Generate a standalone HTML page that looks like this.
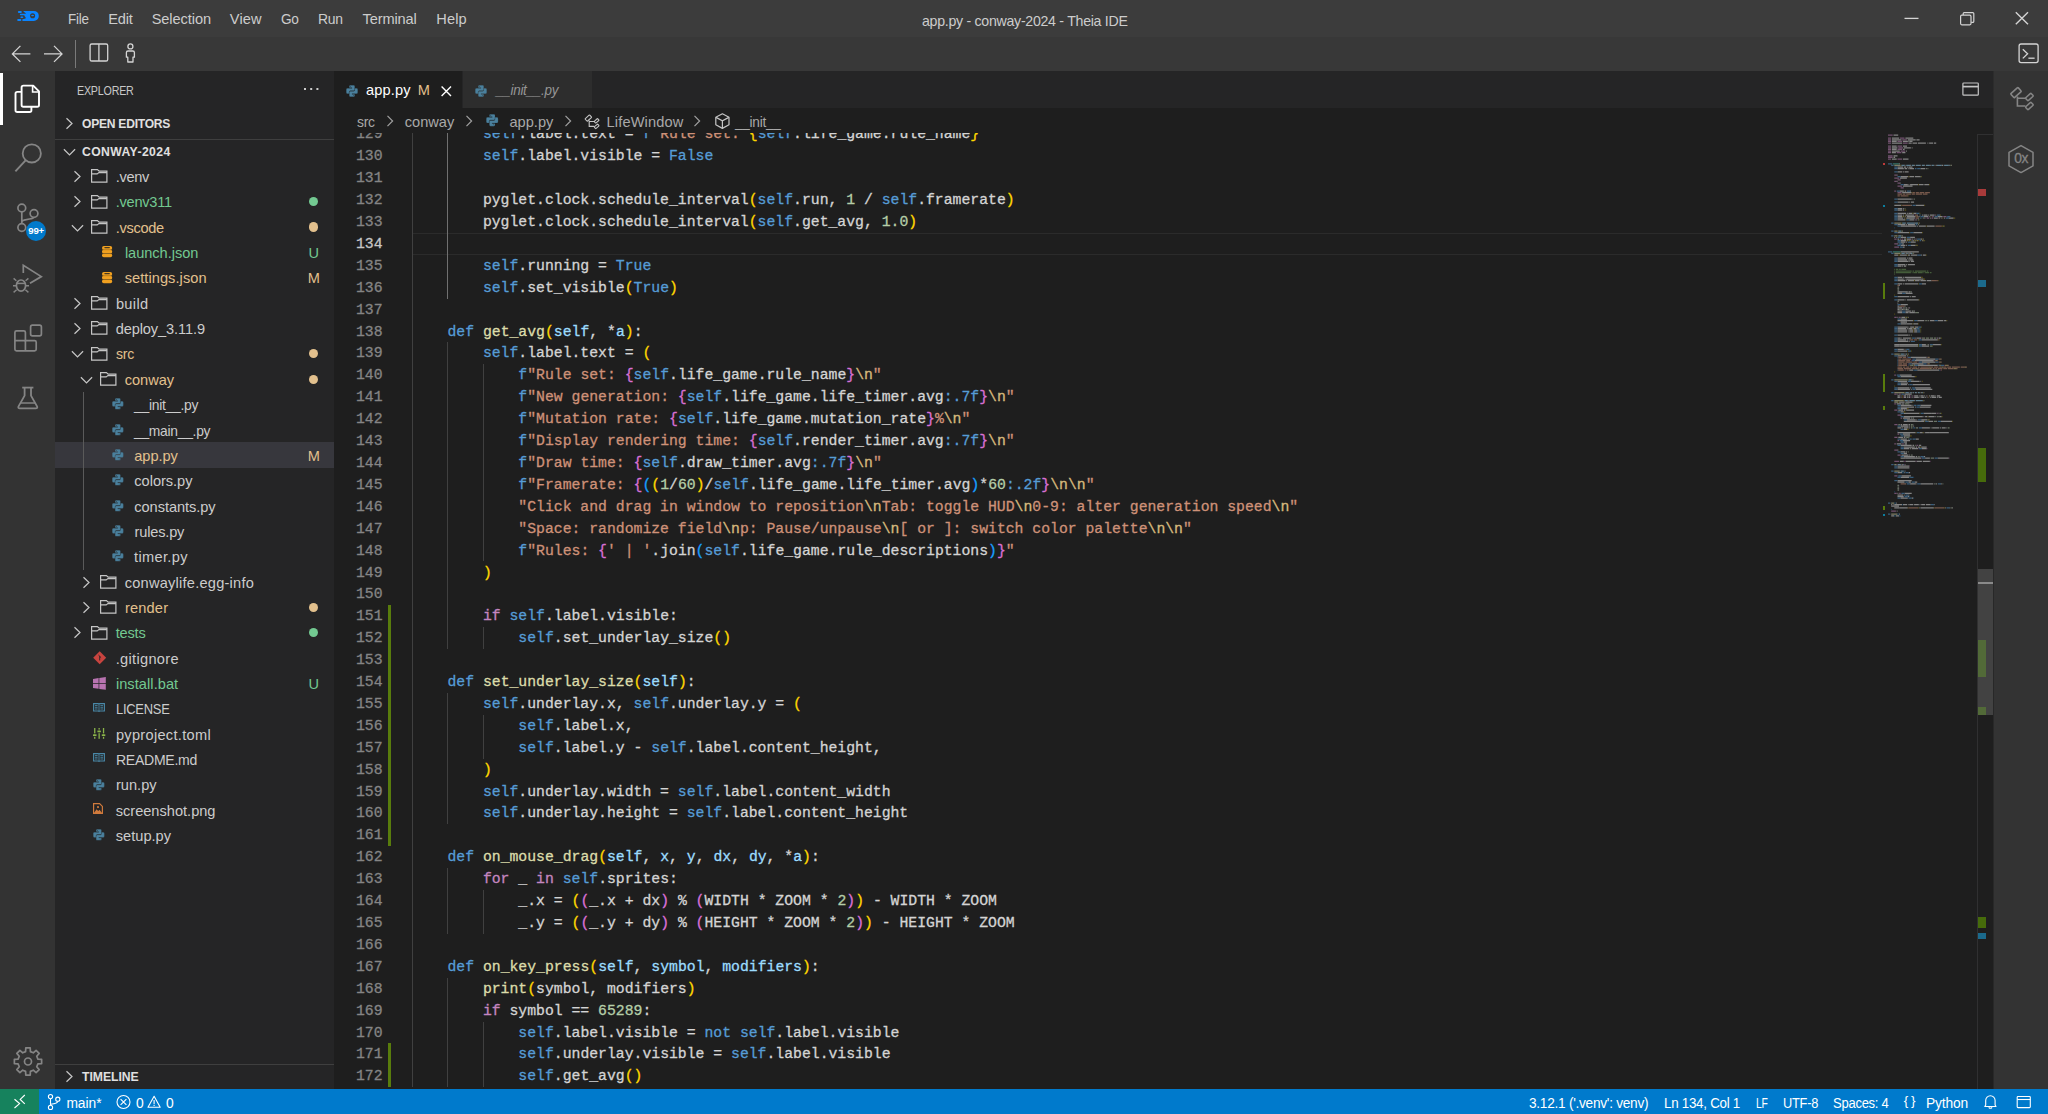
<!DOCTYPE html><html><head><meta charset="utf-8"><title>app.py - conway-2024 - Theia IDE</title><style>*{box-sizing:border-box;margin:0;padding:0}
html,body{width:2048px;height:1114px;overflow:hidden;background:#1e1e1e}
body{font-family:"Liberation Sans",sans-serif;font-size:14px;color:#ccc;position:relative}
i{font-style:normal}
svg{position:absolute;overflow:visible}
div,span{position:absolute}
.t{white-space:pre;color:#ccc;transform-origin:0 0}
.g{color:#73c991}.m{color:#e2c08d}
#code{left:334px;top:133px;width:1660px;height:956px;background:#1e1e1e;overflow:hidden;font-family:"Liberation Mono",monospace;font-size:14.78px;-webkit-text-stroke:0.3px}
.ln{left:0;width:48.5px;text-align:right;line-height:22px;height:22px;color:#858585;white-space:pre}
.lna{color:#c6c6c6}
.cl{left:78px;line-height:22px;height:22px;color:#d4d4d4;white-space:pre}
.ig{width:1px;background:#404040}
.iga{background:#707070}
.chg{left:54px;width:3px;background:#587c0c}
.b1{color:#ffd700}.b2{color:#da70d6}.b3{color:#179fff}.s{color:#ce9178}.e{color:#d7ba7d}.k{color:#569cd6}.n{color:#b5cea8}.f{color:#dcdcaa}.p{color:#9cdcfe}.c{color:#c586c0}
</style></head><body>
<div style="left:0px;top:0px;width:2048px;height:37px;background:#3c3c3c"></div>
<div style="left:0px;top:37px;width:2048px;height:34px;background:#383838"></div>
<div style="left:0px;top:71px;width:55px;height:1018px;background:#333"></div>
<div style="left:1994px;top:71px;width:54px;height:1018px;background:#333"></div>
<div style="left:55px;top:71px;width:279px;height:1018px;background:#252526"></div>
<div style="left:334px;top:71px;width:1660px;height:37px;background:#252526"></div>
<div style="left:334px;top:71px;width:128px;height:37px;background:#1e1e1e"></div>
<div style="left:462.5px;top:71px;width:129.5px;height:37px;background:#2d2d2d"></div>
<svg style="left:0;top:0" width="2048" height="1114" viewBox="0 0 2048 1114"><g fill="#0a84ff"><path d="M23.6 10.9H33.8A5 5 0 0 1 33.8 20.9H22.6Q21.8 20 22.6 19.2L25.6 18.4V17.2L24.4 15.9V14.4L26 13.4L23.4 11.6Z"/><rect x="17.9" y="11.1" width="3.9" height="1.8" rx="0.9"/><rect x="19.8" y="13.7" width="6.4" height="1.5" rx="0.75"/><rect x="20.4" y="16.5" width="2.9" height="1.5" rx="0.75"/><rect x="17.2" y="18.9" width="4.2" height="2" rx="1"/></g><circle cx="32.6" cy="15.8" r="2.55" fill="#3c3c3c"/><ellipse cx="32.6" cy="15.6" rx="1.45" ry="0.75" fill="#0a84ff"/></svg>
<span class="t" style="left:67.80px;top:8px;font-size:14.60px;line-height:22px;letter-spacing:-0.292px;transform:scaleX(0.9236)">File</span>
<span class="t" style="left:108.20px;top:8px;font-size:14.60px;line-height:22px;letter-spacing:-0.195px">Edit</span>
<span class="t" style="left:151.70px;top:8px;font-size:14.60px;line-height:22px;letter-spacing:-0.085px">Selection</span>
<span class="t" style="left:229.80px;top:8px;font-size:14.60px;line-height:22px;letter-spacing:0.137px">View</span>
<span class="t" style="left:280.50px;top:8px;font-size:14.60px;line-height:22px;letter-spacing:-0.292px;transform:scaleX(0.9375)">Go</span>
<span class="t" style="left:318.00px;top:8px;font-size:14.60px;line-height:22px;letter-spacing:-0.292px;transform:scaleX(0.9539)">Run</span>
<span class="t" style="left:362.50px;top:8px;font-size:14.60px;line-height:22px;letter-spacing:-0.113px">Terminal</span>
<span class="t" style="left:436.30px;top:8px;font-size:14.60px;line-height:22px;letter-spacing:0.132px">Help</span>
<span class="t" style="left:921.60px;top:10px;font-size:14.40px;line-height:22px;letter-spacing:-0.288px;transform:scaleX(0.9842)">app.py - conway-2024 - Theia IDE</span>
<svg style="left:0;top:0" width="2048" height="1114" viewBox="0 0 2048 1114"><path d="M1904.5 18.4H1918.5" fill="none" stroke="#d4d4d4" stroke-width="1.3" stroke-linecap="butt" stroke-linejoin="miter"/><path d="M1963.2 15V13.6Q1963.2 12.6 1964.2 12.6H1972.8Q1973.8 12.6 1973.8 13.6V21.4Q1973.8 22.4 1972.8 22.4H1971.2" fill="none" stroke="#d4d4d4" stroke-width="1.2" stroke-linecap="butt" stroke-linejoin="miter"/><rect x="1960.6" y="15.2" width="10.4" height="9.6" rx="1.2" fill="none" stroke="#d4d4d4" stroke-width="1.2" stroke-linecap="butt" stroke-linejoin="miter"/><path d="M2015.8 12.2L2028 24.2M2028 12.2L2015.8 24.2" fill="none" stroke="#d4d4d4" stroke-width="1.4" stroke-linecap="butt" stroke-linejoin="miter"/></svg>
<svg style="left:0;top:0" width="2048" height="1114" viewBox="0 0 2048 1114"><path d="M30.4 53.9H12.6M20.4 45.9L12.4 53.9L20.4 61.9" fill="none" stroke="#d4d4d4" stroke-width="1.3" stroke-linecap="butt" stroke-linejoin="miter"/><path d="M44 53.9H61.8M54 45.9L62 53.9L54 61.9" fill="none" stroke="#d4d4d4" stroke-width="1.3" stroke-linecap="butt" stroke-linejoin="miter"/><rect x="75" y="40" width="1" height="28" fill="#7a7a7a"/><rect x="90.1" y="44" width="17.6" height="17" rx="1.6" fill="none" stroke="#d4d4d4" stroke-width="1.3" stroke-linecap="butt" stroke-linejoin="miter"/><path d="M98.9 44V61" fill="none" stroke="#d4d4d4" stroke-width="1.3" stroke-linecap="butt" stroke-linejoin="miter"/><circle cx="130.4" cy="46.4" r="2.5" fill="none" stroke="#d4d4d4" stroke-width="1.3" stroke-linecap="butt" stroke-linejoin="miter"/><path d="M126.4 52.6Q126.4 51 128 51H132.8Q134.4 51 134.4 52.6V57.2H133V62H127.8V57.2H126.4Z" fill="none" stroke="#d4d4d4" stroke-width="1.3" stroke-linecap="butt" stroke-linejoin="round"/><rect x="2019.1" y="44" width="19" height="18.6" rx="2" fill="none" stroke="#d4d4d4" stroke-width="1.3" stroke-linecap="butt" stroke-linejoin="miter"/><path d="M2022.8 49.2L2027.6 53.8L2022.8 58.4" fill="none" stroke="#d4d4d4" stroke-width="1.3" stroke-linecap="butt" stroke-linejoin="miter"/><path d="M2028.4 58.2H2034.6" fill="none" stroke="#d4d4d4" stroke-width="1.3" stroke-linecap="butt" stroke-linejoin="miter"/></svg>
<div style="left:0px;top:73px;width:3px;height:52px;background:#fff"></div>
<svg style="left:0;top:0" width="2048" height="1114" viewBox="0 0 2048 1114"><path d="M21.6 91.8V87.4Q21.6 85.6 23.4 85.6H33.2L39 91.4V105Q39 106.8 37.2 106.8H23.4Q21.6 106.8 21.6 105Z" fill="none" stroke="#fff" stroke-width="1.9" stroke-linecap="butt" stroke-linejoin="round"/><path d="M32.6 86V92H38.6" fill="none" stroke="#fff" stroke-width="1.6" stroke-linecap="butt" stroke-linejoin="miter"/><path d="M21.4 91.9H17.3Q15.5 91.9 15.5 93.7V110.2Q15.5 112 17.3 112H29.6Q31.4 112 31.4 110.2V107" fill="none" stroke="#fff" stroke-width="1.9" stroke-linecap="butt" stroke-linejoin="round"/><circle cx="31.8" cy="153.4" r="9.1" fill="none" stroke="#858585" stroke-width="1.8" stroke-linecap="butt" stroke-linejoin="miter"/><path d="M25.6 160.4L15.4 171.4" fill="none" stroke="#858585" stroke-width="1.9" stroke-linecap="butt" stroke-linejoin="miter"/><circle cx="21.8" cy="208" r="3.9" fill="none" stroke="#858585" stroke-width="1.7" stroke-linecap="butt" stroke-linejoin="miter"/><circle cx="34" cy="213.5" r="3.9" fill="none" stroke="#858585" stroke-width="1.7" stroke-linecap="butt" stroke-linejoin="miter"/><circle cx="21.8" cy="227.5" r="3.9" fill="none" stroke="#858585" stroke-width="1.7" stroke-linecap="butt" stroke-linejoin="miter"/><path d="M21.8 212V223.6M21.8 222.5Q21.8 220.6 24 220.2L29.5 219Q33.5 218.2 33.8 217.4" fill="none" stroke="#858585" stroke-width="1.7" stroke-linecap="butt" stroke-linejoin="miter"/><path d="M23.3 273V265.3L41.3 276.6L30 283.2" fill="none" stroke="#858585" stroke-width="1.7" stroke-linecap="butt" stroke-linejoin="miter"/><ellipse cx="21" cy="285.6" rx="4.6" ry="5.6" fill="none" stroke="#858585" stroke-width="1.7" stroke-linecap="butt" stroke-linejoin="miter"/><path d="M16.6 283.4H25.4" fill="none" stroke="#858585" stroke-width="1.5" stroke-linecap="butt" stroke-linejoin="miter"/><path d="M16.4 280.8L13.6 278.4M25.6 280.8L28.4 278.4M16.2 285.8H13M25.8 285.8H29M16.6 289.8L13.6 292.4M25.4 289.8L28.4 292.4" fill="none" stroke="#858585" stroke-width="1.4" stroke-linecap="butt" stroke-linejoin="miter"/><path d="M14.9 332.4Q14.9 330.8 16.5 330.8H23.8Q25.4 330.8 25.4 332.4V340.6H34.6Q36.2 340.6 36.2 342.2V349.2Q36.2 350.8 34.6 350.8H16.5Q14.9 350.8 14.9 349.2Z" fill="none" stroke="#858585" stroke-width="1.7" stroke-linecap="butt" stroke-linejoin="miter"/><path d="M14.9 340.6H25.4V350.8" fill="none" stroke="#858585" stroke-width="1.7" stroke-linecap="butt" stroke-linejoin="miter"/><rect x="30.6" y="325.2" width="10.8" height="10.6" rx="1.8" fill="none" stroke="#858585" stroke-width="1.7" stroke-linecap="butt" stroke-linejoin="miter"/><path d="M22.2 387.6H33.4" fill="none" stroke="#858585" stroke-width="1.8" stroke-linecap="butt" stroke-linejoin="miter"/><path d="M24.6 387.6V395.6L18.4 406.6Q18 408.4 19.8 408.4H35.8Q37.6 408.4 37.2 406.6L31 395.6V387.6" fill="none" stroke="#858585" stroke-width="1.8" stroke-linecap="butt" stroke-linejoin="round"/><path d="M20.6 403H35" fill="none" stroke="#858585" stroke-width="1.5" stroke-linecap="butt" stroke-linejoin="miter"/><path d="M25.58 1051.59L25.80 1047.88L30.20 1047.88L30.42 1051.59L33.29 1052.78L36.08 1050.31L39.19 1053.42L36.72 1056.21L37.91 1059.08L41.62 1059.30L41.62 1063.70L37.91 1063.92L36.72 1066.79L39.19 1069.58L36.08 1072.69L33.29 1070.22L30.42 1071.41L30.20 1075.12L25.80 1075.12L25.58 1071.41L22.71 1070.22L19.92 1072.69L16.81 1069.58L19.28 1066.79L18.09 1063.92L14.38 1063.70L14.38 1059.30L18.09 1059.08L19.28 1056.21L16.81 1053.42L19.92 1050.31L22.71 1052.78Z" fill="none" stroke="#858585" stroke-width="1.7" stroke-linecap="butt" stroke-linejoin="round"/><circle cx="28" cy="1061.5" r="3.5" fill="none" stroke="#858585" stroke-width="1.7" stroke-linecap="butt" stroke-linejoin="miter"/></svg><div style="left:26.2px;top:221px;width:20px;height:20px;border-radius:10px;background:#007acc;color:#fff;font-size:9.6px;font-weight:bold;line-height:20px;text-align:center;letter-spacing:-0.2px">99+</div>
<svg style="left:0;top:0" width="2048" height="1114" viewBox="0 0 2048 1114"><rect x="-4.9" y="-2.7" width="9.8" height="5.4" rx="0.8" transform="translate(2016 92.6) rotate(-42)" fill="none" stroke="#858585" stroke-width="1.6" stroke-linecap="butt" stroke-linejoin="miter"/><rect x="-3.7" y="-1.9" width="7.4" height="3.8" rx="0.8" transform="translate(2029.4 97) rotate(-42)" fill="none" stroke="#858585" stroke-width="1.5" stroke-linecap="butt" stroke-linejoin="miter"/><rect x="-3.7" y="-1.9" width="7.4" height="3.8" rx="0.8" transform="translate(2029.4 106) rotate(-42)" fill="none" stroke="#858585" stroke-width="1.5" stroke-linecap="butt" stroke-linejoin="miter"/><path d="M2017.4 96.6V106H2025.4M2017.4 98.2H2025.6" fill="none" stroke="#858585" stroke-width="1.6" stroke-linecap="butt" stroke-linejoin="miter"/><path d="M2021 145.6L2033 152.4V165.8L2021 172.6L2009 165.8V152.4Z" fill="none" stroke="#858585" stroke-width="1.5" stroke-linecap="butt" stroke-linejoin="round"/></svg><div style="left:2008px;top:149px;width:26px;text-align:center;font-size:13.8px;line-height:20px;color:#858585;letter-spacing:-0.5px;-webkit-text-stroke:0.3px">0x</div>
<span class="t" style="left:77.40px;top:80px;font-size:13.00px;line-height:21px;letter-spacing:-0.260px;transform:scaleX(0.8236);color:#c8c8c8">EXPLORER</span>
<div style="left:303.8px;top:88.3px;width:2.2px;height:2.2px;background:#ccc;box-shadow:6.2px 0 #ccc,12.4px 0 #ccc"></div>
<svg style="left:64.9px;top:116.9px" width="9" height="13" viewBox="0 0 9 13" ><path d="M1.5 1.2L7 6.5L1.5 11.8" fill="none" stroke="#c5c5c5" stroke-width="1.25" stroke-linecap="butt" stroke-linejoin="miter"/></svg>
<span class="t" style="left:82.00px;top:114px;font-size:12.20px;line-height:20px;letter-spacing:-0.244px;transform:scaleX(0.9910);color:#e0e0e0;font-weight:bold">OPEN EDITORS</span>
<div style="left:55px;top:139px;width:279px;height:1px;background:#3f3f3f"></div>
<svg style="left:63px;top:147.5px" width="13" height="8" viewBox="0 0 13 8" ><path d="M0.9 1.3L6.5 6.9L12.1 1.3" fill="none" stroke="#c5c5c5" stroke-width="1.25" stroke-linecap="butt" stroke-linejoin="miter"/></svg>
<span class="t" style="left:82.00px;top:142px;font-size:12.20px;line-height:20px;letter-spacing:0.400px;color:#e0e0e0;font-weight:bold">CONWAY-2024</span>
<svg style="left:73px;top:170px" width="9" height="13" viewBox="0 0 9 13" ><path d="M1.5 1.2L7 6.5L1.5 11.8" fill="none" stroke="#c5c5c5" stroke-width="1.25" stroke-linecap="butt" stroke-linejoin="miter"/></svg>
<svg style="left:90.9px;top:169.3px" width="17" height="14" viewBox="0 0 17 14" ><path d="M0.6 0.6H6.4L8.2 2.2H15.9V13.1H0.6Z" fill="none" stroke="#c5c5c5" stroke-width="1.2" stroke-linecap="butt" stroke-linejoin="miter"/><path d="M0.6 4.9H6.2L7.9 3.6H15.9" fill="none" stroke="#c5c5c5" stroke-width="1.1" stroke-linecap="butt" stroke-linejoin="miter"/></svg>
<span class="t" style="left:115.70px;top:166px;font-size:14.60px;line-height:22px;letter-spacing:-0.292px;color:#ccc">.venv</span>
<svg style="left:73px;top:195.35px" width="9" height="13" viewBox="0 0 9 13" ><path d="M1.5 1.2L7 6.5L1.5 11.8" fill="none" stroke="#c5c5c5" stroke-width="1.25" stroke-linecap="butt" stroke-linejoin="miter"/></svg>
<svg style="left:90.9px;top:194.65px" width="17" height="14" viewBox="0 0 17 14" ><path d="M0.6 0.6H6.4L8.2 2.2H15.9V13.1H0.6Z" fill="none" stroke="#c5c5c5" stroke-width="1.2" stroke-linecap="butt" stroke-linejoin="miter"/><path d="M0.6 4.9H6.2L7.9 3.6H15.9" fill="none" stroke="#c5c5c5" stroke-width="1.1" stroke-linecap="butt" stroke-linejoin="miter"/></svg>
<span class="t" style="left:115.70px;top:191px;font-size:14.60px;line-height:22px;letter-spacing:-0.254px;color:#73c991">.venv311</span>
<div style="left:308.6px;top:197.0px;width:9.2px;height:9.2px;border-radius:50%;background:#73c991"></div>
<svg style="left:71px;top:223.7px" width="13" height="8" viewBox="0 0 13 8" ><path d="M0.9 1.3L6.5 6.9L12.1 1.3" fill="none" stroke="#c5c5c5" stroke-width="1.25" stroke-linecap="butt" stroke-linejoin="miter"/></svg>
<svg style="left:90.9px;top:220px" width="17" height="14" viewBox="0 0 17 14" ><path d="M0.6 0.6H6.4L8.2 2.2H15.9V13.1H0.6Z" fill="none" stroke="#c5c5c5" stroke-width="1.2" stroke-linecap="butt" stroke-linejoin="miter"/><path d="M0.6 4.9H6.2L7.9 3.6H15.9" fill="none" stroke="#c5c5c5" stroke-width="1.1" stroke-linecap="butt" stroke-linejoin="miter"/></svg>
<span class="t" style="left:115.70px;top:217px;font-size:14.60px;line-height:22px;letter-spacing:-0.292px;color:#e2c08d">.vscode</span>
<div style="left:308.6px;top:222.4px;width:9.2px;height:9.2px;border-radius:50%;background:#e2c08d"></div>
<svg style="left:102px;top:246.35px" width="10.2" height="11.4" viewBox="0 0 10.2 11.4" ><g fill="#f0a020"><rect x="0" y="0" width="10.2" height="3.9" rx="1.9"/><rect x="0" y="3.8" width="10.2" height="3.5" rx="1.6"/><rect x="0" y="7.5" width="10.2" height="3.8" rx="1.8"/></g><rect x="2.3" y="1" width="5.6" height="1.2" rx="0.6" fill="#4a3a20"/><rect x="0" y="3.6" width="10.2" height="0.5" fill="#8a6018"/><rect x="0" y="7.2" width="10.2" height="0.5" fill="#8a6018"/></svg>
<span class="t" style="left:124.90px;top:242px;font-size:14.60px;line-height:22px;letter-spacing:-0.038px;color:#73c991">launch.json</span>
<span class="t" style="left:308.60px;top:242px;font-size:14.60px;line-height:22px;color:#73c991">U</span>
<svg style="left:102px;top:271.7px" width="10.2" height="11.4" viewBox="0 0 10.2 11.4" ><g fill="#f0a020"><rect x="0" y="0" width="10.2" height="3.9" rx="1.9"/><rect x="0" y="3.8" width="10.2" height="3.5" rx="1.6"/><rect x="0" y="7.5" width="10.2" height="3.8" rx="1.8"/></g><rect x="2.3" y="1" width="5.6" height="1.2" rx="0.6" fill="#4a3a20"/><rect x="0" y="3.6" width="10.2" height="0.5" fill="#8a6018"/><rect x="0" y="7.2" width="10.2" height="0.5" fill="#8a6018"/></svg>
<span class="t" style="left:124.70px;top:267px;font-size:14.60px;line-height:22px;letter-spacing:0.060px;color:#e2c08d">settings.json</span>
<span class="t" style="left:307.80px;top:267px;font-size:14.60px;line-height:22px;color:#e2c08d">M</span>
<svg style="left:73px;top:296.75px" width="9" height="13" viewBox="0 0 9 13" ><path d="M1.5 1.2L7 6.5L1.5 11.8" fill="none" stroke="#c5c5c5" stroke-width="1.25" stroke-linecap="butt" stroke-linejoin="miter"/></svg>
<svg style="left:90.9px;top:296.05px" width="17" height="14" viewBox="0 0 17 14" ><path d="M0.6 0.6H6.4L8.2 2.2H15.9V13.1H0.6Z" fill="none" stroke="#c5c5c5" stroke-width="1.2" stroke-linecap="butt" stroke-linejoin="miter"/><path d="M0.6 4.9H6.2L7.9 3.6H15.9" fill="none" stroke="#c5c5c5" stroke-width="1.1" stroke-linecap="butt" stroke-linejoin="miter"/></svg>
<span class="t" style="left:115.90px;top:293px;font-size:14.60px;line-height:22px;letter-spacing:0.355px;color:#ccc">build</span>
<svg style="left:73px;top:322.1px" width="9" height="13" viewBox="0 0 9 13" ><path d="M1.5 1.2L7 6.5L1.5 11.8" fill="none" stroke="#c5c5c5" stroke-width="1.25" stroke-linecap="butt" stroke-linejoin="miter"/></svg>
<svg style="left:90.9px;top:321.4px" width="17" height="14" viewBox="0 0 17 14" ><path d="M0.6 0.6H6.4L8.2 2.2H15.9V13.1H0.6Z" fill="none" stroke="#c5c5c5" stroke-width="1.2" stroke-linecap="butt" stroke-linejoin="miter"/><path d="M0.6 4.9H6.2L7.9 3.6H15.9" fill="none" stroke="#c5c5c5" stroke-width="1.1" stroke-linecap="butt" stroke-linejoin="miter"/></svg>
<span class="t" style="left:115.70px;top:318px;font-size:14.60px;line-height:22px;letter-spacing:-0.106px;color:#ccc">deploy_3.11.9</span>
<svg style="left:71px;top:350.45px" width="13" height="8" viewBox="0 0 13 8" ><path d="M0.9 1.3L6.5 6.9L12.1 1.3" fill="none" stroke="#c5c5c5" stroke-width="1.25" stroke-linecap="butt" stroke-linejoin="miter"/></svg>
<svg style="left:90.9px;top:346.75px" width="17" height="14" viewBox="0 0 17 14" ><path d="M0.6 0.6H6.4L8.2 2.2H15.9V13.1H0.6Z" fill="none" stroke="#c5c5c5" stroke-width="1.2" stroke-linecap="butt" stroke-linejoin="miter"/><path d="M0.6 4.9H6.2L7.9 3.6H15.9" fill="none" stroke="#c5c5c5" stroke-width="1.1" stroke-linecap="butt" stroke-linejoin="miter"/></svg>
<span class="t" style="left:115.70px;top:343px;font-size:14.60px;line-height:22px;letter-spacing:-0.292px;transform:scaleX(0.9626);color:#e2c08d">src</span>
<div style="left:308.6px;top:349.2px;width:9.2px;height:9.2px;border-radius:50%;background:#e2c08d"></div>
<svg style="left:80px;top:375.8px" width="13" height="8" viewBox="0 0 13 8" ><path d="M0.9 1.3L6.5 6.9L12.1 1.3" fill="none" stroke="#c5c5c5" stroke-width="1.25" stroke-linecap="butt" stroke-linejoin="miter"/></svg>
<svg style="left:99.9px;top:372.1px" width="17" height="14" viewBox="0 0 17 14" ><path d="M0.6 0.6H6.4L8.2 2.2H15.9V13.1H0.6Z" fill="none" stroke="#c5c5c5" stroke-width="1.2" stroke-linecap="butt" stroke-linejoin="miter"/><path d="M0.6 4.9H6.2L7.9 3.6H15.9" fill="none" stroke="#c5c5c5" stroke-width="1.1" stroke-linecap="butt" stroke-linejoin="miter"/></svg>
<span class="t" style="left:124.70px;top:369px;font-size:14.60px;line-height:22px;letter-spacing:-0.019px;color:#e2c08d">conway</span>
<div style="left:308.6px;top:374.5px;width:9.2px;height:9.2px;border-radius:50%;background:#e2c08d"></div>
<svg style="left:112px;top:398.25px" width="11.6" height="11.6" viewBox="0 0 24 24" ><g fill="#4a809d" stroke="#252526" stroke-width="0.35"><path d="M8.5 0.5H15.5Q17.5 0.5 17.5 2.5V9.5Q17.5 11.5 15.5 11.5H9Q6.5 11.5 6.5 14V17.5H3Q0.5 17.5 0.5 15V9Q0.5 6.5 3 6.5H12V5.5H6.5V2.5Q6.5 0.5 8.5 0.5Z"/><path d="M8.5 0.5H15.5Q17.5 0.5 17.5 2.5V9.5Q17.5 11.5 15.5 11.5H9Q6.5 11.5 6.5 14V17.5H3Q0.5 17.5 0.5 15V9Q0.5 6.5 3 6.5H12V5.5H6.5V2.5Q6.5 0.5 8.5 0.5Z" transform="rotate(180 12 12)"/></g><circle cx="9.2" cy="3.1" r="0.8" fill="#252526"/><circle cx="14.8" cy="20.9" r="0.8" fill="#252526"/></svg>
<span class="t" style="left:134.18px;top:394px;font-size:14.60px;line-height:22px;letter-spacing:-0.292px;transform:scaleX(0.9535);color:#ccc">__init__.py</span>
<svg style="left:112px;top:423.6px" width="11.6" height="11.6" viewBox="0 0 24 24" ><g fill="#4a809d" stroke="#252526" stroke-width="0.35"><path d="M8.5 0.5H15.5Q17.5 0.5 17.5 2.5V9.5Q17.5 11.5 15.5 11.5H9Q6.5 11.5 6.5 14V17.5H3Q0.5 17.5 0.5 15V9Q0.5 6.5 3 6.5H12V5.5H6.5V2.5Q6.5 0.5 8.5 0.5Z"/><path d="M8.5 0.5H15.5Q17.5 0.5 17.5 2.5V9.5Q17.5 11.5 15.5 11.5H9Q6.5 11.5 6.5 14V17.5H3Q0.5 17.5 0.5 15V9Q0.5 6.5 3 6.5H12V5.5H6.5V2.5Q6.5 0.5 8.5 0.5Z" transform="rotate(180 12 12)"/></g><circle cx="9.2" cy="3.1" r="0.8" fill="#252526"/><circle cx="14.8" cy="20.9" r="0.8" fill="#252526"/></svg>
<span class="t" style="left:134.18px;top:420px;font-size:14.60px;line-height:22px;letter-spacing:-0.292px;transform:scaleX(0.9487);color:#ccc">__main__.py</span>
<div style="left:55px;top:442px;width:279px;height:26px;background:#37373d"></div>
<svg style="left:112px;top:448.95px" width="11.6" height="11.6" viewBox="0 0 24 24" ><g fill="#4a809d" stroke="#37373d" stroke-width="0.35"><path d="M8.5 0.5H15.5Q17.5 0.5 17.5 2.5V9.5Q17.5 11.5 15.5 11.5H9Q6.5 11.5 6.5 14V17.5H3Q0.5 17.5 0.5 15V9Q0.5 6.5 3 6.5H12V5.5H6.5V2.5Q6.5 0.5 8.5 0.5Z"/><path d="M8.5 0.5H15.5Q17.5 0.5 17.5 2.5V9.5Q17.5 11.5 15.5 11.5H9Q6.5 11.5 6.5 14V17.5H3Q0.5 17.5 0.5 15V9Q0.5 6.5 3 6.5H12V5.5H6.5V2.5Q6.5 0.5 8.5 0.5Z" transform="rotate(180 12 12)"/></g><circle cx="9.2" cy="3.1" r="0.8" fill="#37373d"/><circle cx="14.8" cy="20.9" r="0.8" fill="#37373d"/></svg>
<span class="t" style="left:134.30px;top:445px;font-size:14.60px;line-height:22px;letter-spacing:-0.075px;color:#e2c08d">app.py</span>
<span class="t" style="left:307.80px;top:445px;font-size:14.60px;line-height:22px;color:#e2c08d">M</span>
<svg style="left:112px;top:474.3px" width="11.6" height="11.6" viewBox="0 0 24 24" ><g fill="#4a809d" stroke="#252526" stroke-width="0.35"><path d="M8.5 0.5H15.5Q17.5 0.5 17.5 2.5V9.5Q17.5 11.5 15.5 11.5H9Q6.5 11.5 6.5 14V17.5H3Q0.5 17.5 0.5 15V9Q0.5 6.5 3 6.5H12V5.5H6.5V2.5Q6.5 0.5 8.5 0.5Z"/><path d="M8.5 0.5H15.5Q17.5 0.5 17.5 2.5V9.5Q17.5 11.5 15.5 11.5H9Q6.5 11.5 6.5 14V17.5H3Q0.5 17.5 0.5 15V9Q0.5 6.5 3 6.5H12V5.5H6.5V2.5Q6.5 0.5 8.5 0.5Z" transform="rotate(180 12 12)"/></g><circle cx="9.2" cy="3.1" r="0.8" fill="#252526"/><circle cx="14.8" cy="20.9" r="0.8" fill="#252526"/></svg>
<span class="t" style="left:134.30px;top:470px;font-size:14.60px;line-height:22px;letter-spacing:-0.025px;color:#ccc">colors.py</span>
<svg style="left:112px;top:499.65px" width="11.6" height="11.6" viewBox="0 0 24 24" ><g fill="#4a809d" stroke="#252526" stroke-width="0.35"><path d="M8.5 0.5H15.5Q17.5 0.5 17.5 2.5V9.5Q17.5 11.5 15.5 11.5H9Q6.5 11.5 6.5 14V17.5H3Q0.5 17.5 0.5 15V9Q0.5 6.5 3 6.5H12V5.5H6.5V2.5Q6.5 0.5 8.5 0.5Z"/><path d="M8.5 0.5H15.5Q17.5 0.5 17.5 2.5V9.5Q17.5 11.5 15.5 11.5H9Q6.5 11.5 6.5 14V17.5H3Q0.5 17.5 0.5 15V9Q0.5 6.5 3 6.5H12V5.5H6.5V2.5Q6.5 0.5 8.5 0.5Z" transform="rotate(180 12 12)"/></g><circle cx="9.2" cy="3.1" r="0.8" fill="#252526"/><circle cx="14.8" cy="20.9" r="0.8" fill="#252526"/></svg>
<span class="t" style="left:134.30px;top:496px;font-size:14.60px;line-height:22px;letter-spacing:-0.053px;color:#ccc">constants.py</span>
<svg style="left:112px;top:525px" width="11.6" height="11.6" viewBox="0 0 24 24" ><g fill="#4a809d" stroke="#252526" stroke-width="0.35"><path d="M8.5 0.5H15.5Q17.5 0.5 17.5 2.5V9.5Q17.5 11.5 15.5 11.5H9Q6.5 11.5 6.5 14V17.5H3Q0.5 17.5 0.5 15V9Q0.5 6.5 3 6.5H12V5.5H6.5V2.5Q6.5 0.5 8.5 0.5Z"/><path d="M8.5 0.5H15.5Q17.5 0.5 17.5 2.5V9.5Q17.5 11.5 15.5 11.5H9Q6.5 11.5 6.5 14V17.5H3Q0.5 17.5 0.5 15V9Q0.5 6.5 3 6.5H12V5.5H6.5V2.5Q6.5 0.5 8.5 0.5Z" transform="rotate(180 12 12)"/></g><circle cx="9.2" cy="3.1" r="0.8" fill="#252526"/><circle cx="14.8" cy="20.9" r="0.8" fill="#252526"/></svg>
<span class="t" style="left:134.50px;top:521px;font-size:14.60px;line-height:22px;letter-spacing:-0.171px;color:#ccc">rules.py</span>
<svg style="left:112px;top:550.35px" width="11.6" height="11.6" viewBox="0 0 24 24" ><g fill="#4a809d" stroke="#252526" stroke-width="0.35"><path d="M8.5 0.5H15.5Q17.5 0.5 17.5 2.5V9.5Q17.5 11.5 15.5 11.5H9Q6.5 11.5 6.5 14V17.5H3Q0.5 17.5 0.5 15V9Q0.5 6.5 3 6.5H12V5.5H6.5V2.5Q6.5 0.5 8.5 0.5Z"/><path d="M8.5 0.5H15.5Q17.5 0.5 17.5 2.5V9.5Q17.5 11.5 15.5 11.5H9Q6.5 11.5 6.5 14V17.5H3Q0.5 17.5 0.5 15V9Q0.5 6.5 3 6.5H12V5.5H6.5V2.5Q6.5 0.5 8.5 0.5Z" transform="rotate(180 12 12)"/></g><circle cx="9.2" cy="3.1" r="0.8" fill="#252526"/><circle cx="14.8" cy="20.9" r="0.8" fill="#252526"/></svg>
<span class="t" style="left:134.10px;top:546px;font-size:14.60px;line-height:22px;letter-spacing:0.329px;color:#ccc">timer.py</span>
<svg style="left:82px;top:575.6px" width="9" height="13" viewBox="0 0 9 13" ><path d="M1.5 1.2L7 6.5L1.5 11.8" fill="none" stroke="#c5c5c5" stroke-width="1.25" stroke-linecap="butt" stroke-linejoin="miter"/></svg>
<svg style="left:99.9px;top:574.9px" width="17" height="14" viewBox="0 0 17 14" ><path d="M0.6 0.6H6.4L8.2 2.2H15.9V13.1H0.6Z" fill="none" stroke="#c5c5c5" stroke-width="1.2" stroke-linecap="butt" stroke-linejoin="miter"/><path d="M0.6 4.9H6.2L7.9 3.6H15.9" fill="none" stroke="#c5c5c5" stroke-width="1.1" stroke-linecap="butt" stroke-linejoin="miter"/></svg>
<span class="t" style="left:124.70px;top:572px;font-size:14.60px;line-height:22px;letter-spacing:0.235px;color:#ccc">conwaylife.egg-info</span>
<svg style="left:82px;top:600.95px" width="9" height="13" viewBox="0 0 9 13" ><path d="M1.5 1.2L7 6.5L1.5 11.8" fill="none" stroke="#c5c5c5" stroke-width="1.25" stroke-linecap="butt" stroke-linejoin="miter"/></svg>
<svg style="left:99.9px;top:600.25px" width="17" height="14" viewBox="0 0 17 14" ><path d="M0.6 0.6H6.4L8.2 2.2H15.9V13.1H0.6Z" fill="none" stroke="#c5c5c5" stroke-width="1.2" stroke-linecap="butt" stroke-linejoin="miter"/><path d="M0.6 4.9H6.2L7.9 3.6H15.9" fill="none" stroke="#c5c5c5" stroke-width="1.1" stroke-linecap="butt" stroke-linejoin="miter"/></svg>
<span class="t" style="left:125.00px;top:597px;font-size:14.60px;line-height:22px;letter-spacing:0.161px;color:#e2c08d">render</span>
<div style="left:308.6px;top:602.7px;width:9.2px;height:9.2px;border-radius:50%;background:#e2c08d"></div>
<svg style="left:73px;top:626.3px" width="9" height="13" viewBox="0 0 9 13" ><path d="M1.5 1.2L7 6.5L1.5 11.8" fill="none" stroke="#c5c5c5" stroke-width="1.25" stroke-linecap="butt" stroke-linejoin="miter"/></svg>
<svg style="left:90.9px;top:625.6px" width="17" height="14" viewBox="0 0 17 14" ><path d="M0.6 0.6H6.4L8.2 2.2H15.9V13.1H0.6Z" fill="none" stroke="#c5c5c5" stroke-width="1.2" stroke-linecap="butt" stroke-linejoin="miter"/><path d="M0.6 4.9H6.2L7.9 3.6H15.9" fill="none" stroke="#c5c5c5" stroke-width="1.1" stroke-linecap="butt" stroke-linejoin="miter"/></svg>
<span class="t" style="left:115.70px;top:622px;font-size:14.60px;line-height:22px;letter-spacing:-0.202px;color:#73c991">tests</span>
<div style="left:308.6px;top:628.0px;width:9.2px;height:9.2px;border-radius:50%;background:#73c991"></div>
<svg style="left:92.8px;top:650.75px" width="13.4" height="13.4" viewBox="0 0 13.4 13.4" ><path d="M6.7 0.2L13.2 6.7L6.7 13.2L0.2 6.7Z" fill="#c8443f"/><path d="M5.5 4.1L8.1 6.7M6.7 5.3V9.5" stroke="#252526" stroke-width="0.9" fill="none"/></svg>
<span class="t" style="left:115.70px;top:648px;font-size:14.60px;line-height:22px;letter-spacing:0.313px;color:#ccc">.gitignore</span>
<svg style="left:93px;top:676.5px" width="12.8" height="12.8" viewBox="0 0 12.8 12.8" ><g fill="#b873b0"><path d="M0 1.9L5.6 1.1V6.1H0Z"/><path d="M6.3 1L12.8 0V6.1H6.3Z"/><path d="M0 6.8H5.6V11.8L0 11Z"/><path d="M6.3 6.8H12.8V12.8L6.3 11.9Z"/></g></svg>
<span class="t" style="left:115.90px;top:673px;font-size:14.60px;line-height:22px;letter-spacing:0.061px;color:#73c991">install.bat</span>
<span class="t" style="left:308.60px;top:673px;font-size:14.60px;line-height:22px;color:#73c991">U</span>
<svg style="left:93.4px;top:702.75px" width="12" height="9.4" viewBox="0 0 12 9.4" ><path d="M0.6 0.6H5Q6 0.6 6 1.4Q6 0.6 7 0.6H11.4V8H7Q6 8 6 8.8Q6 8 5 8H0.6Z" fill="none" stroke="#4a89a8" stroke-width="1.1" stroke-linecap="butt" stroke-linejoin="miter"/><path d="M6 1.4V8.4M1.9 2.6H4.6M1.9 4.3H4.6M1.9 6H4.6M7.4 2.6H10.1M7.4 4.3H10.1M7.4 6H10.1" fill="none" stroke="#4a89a8" stroke-width="0.9" stroke-linecap="butt" stroke-linejoin="miter"/></svg>
<span class="t" style="left:116.00px;top:698px;font-size:14.60px;line-height:22px;letter-spacing:-0.292px;transform:scaleX(0.8858);color:#ccc">LICENSE</span>
<svg style="left:92.8px;top:727.9px" width="12.4" height="10.8" viewBox="0 0 12.4 10.8" ><g fill="#8ab34a"><rect x="1.1" y="0" width="1.3" height="10.8"/><rect x="5.5" y="0" width="1.3" height="10.8"/><rect x="9.9" y="0" width="1.3" height="10.8"/><rect x="0" y="6.2" width="3.5" height="2"/><rect x="4.4" y="2.4" width="3.5" height="2"/><rect x="8.8" y="6.2" width="3.5" height="2"/></g><g fill="#252526"><rect x="0" y="5.4" width="3.5" height="0.8"/><rect x="0" y="8.2" width="3.5" height="0.8"/><rect x="4.4" y="1.6" width="3.5" height="0.8"/><rect x="4.4" y="4.4" width="3.5" height="0.8"/><rect x="8.8" y="5.4" width="3.5" height="0.8"/><rect x="8.8" y="8.2" width="3.5" height="0.8"/></g></svg>
<span class="t" style="left:115.90px;top:724px;font-size:14.60px;line-height:22px;letter-spacing:0.301px;color:#ccc">pyproject.toml</span>
<svg style="left:93.4px;top:753.45px" width="12" height="9.4" viewBox="0 0 12 9.4" ><path d="M0.6 0.6H5Q6 0.6 6 1.4Q6 0.6 7 0.6H11.4V8H7Q6 8 6 8.8Q6 8 5 8H0.6Z" fill="none" stroke="#4a89a8" stroke-width="1.1" stroke-linecap="butt" stroke-linejoin="miter"/><path d="M6 1.4V8.4M1.9 2.6H4.6M1.9 4.3H4.6M1.9 6H4.6M7.4 2.6H10.1M7.4 4.3H10.1M7.4 6H10.1" fill="none" stroke="#4a89a8" stroke-width="0.9" stroke-linecap="butt" stroke-linejoin="miter"/></svg>
<span class="t" style="left:116.00px;top:749px;font-size:14.60px;line-height:22px;letter-spacing:-0.292px;transform:scaleX(0.9626);color:#ccc">README.md</span>
<svg style="left:92.8px;top:778.5px" width="11.6" height="11.6" viewBox="0 0 24 24" ><g fill="#4a809d" stroke="#252526" stroke-width="0.35"><path d="M8.5 0.5H15.5Q17.5 0.5 17.5 2.5V9.5Q17.5 11.5 15.5 11.5H9Q6.5 11.5 6.5 14V17.5H3Q0.5 17.5 0.5 15V9Q0.5 6.5 3 6.5H12V5.5H6.5V2.5Q6.5 0.5 8.5 0.5Z"/><path d="M8.5 0.5H15.5Q17.5 0.5 17.5 2.5V9.5Q17.5 11.5 15.5 11.5H9Q6.5 11.5 6.5 14V17.5H3Q0.5 17.5 0.5 15V9Q0.5 6.5 3 6.5H12V5.5H6.5V2.5Q6.5 0.5 8.5 0.5Z" transform="rotate(180 12 12)"/></g><circle cx="9.2" cy="3.1" r="0.8" fill="#252526"/><circle cx="14.8" cy="20.9" r="0.8" fill="#252526"/></svg>
<span class="t" style="left:115.90px;top:774px;font-size:14.60px;line-height:22px;letter-spacing:0.042px;color:#ccc">run.py</span>
<svg style="left:92.8px;top:803.05px" width="10.2" height="11.2" viewBox="0 0 10.2 11.2" ><path d="M0.6 0.6H6.6L9.4 3.4V10.4H0.6Z" fill="none" stroke="#d07a3c" stroke-width="1.2" stroke-linecap="butt" stroke-linejoin="miter"/><path d="M0.8 10.2L3.6 6.2L5.2 8L6.6 6.8L9.2 10.2Z" fill="#d07a3c"/><circle cx="5" cy="4.1" r="1.1" fill="#d07a3c"/></svg>
<span class="t" style="left:115.70px;top:800px;font-size:14.60px;line-height:22px;color:#ccc">screenshot.png</span>
<svg style="left:92.8px;top:829.2px" width="11.6" height="11.6" viewBox="0 0 24 24" ><g fill="#4a809d" stroke="#252526" stroke-width="0.35"><path d="M8.5 0.5H15.5Q17.5 0.5 17.5 2.5V9.5Q17.5 11.5 15.5 11.5H9Q6.5 11.5 6.5 14V17.5H3Q0.5 17.5 0.5 15V9Q0.5 6.5 3 6.5H12V5.5H6.5V2.5Q6.5 0.5 8.5 0.5Z"/><path d="M8.5 0.5H15.5Q17.5 0.5 17.5 2.5V9.5Q17.5 11.5 15.5 11.5H9Q6.5 11.5 6.5 14V17.5H3Q0.5 17.5 0.5 15V9Q0.5 6.5 3 6.5H12V5.5H6.5V2.5Q6.5 0.5 8.5 0.5Z" transform="rotate(180 12 12)"/></g><circle cx="9.2" cy="3.1" r="0.8" fill="#252526"/><circle cx="14.8" cy="20.9" r="0.8" fill="#252526"/></svg>
<span class="t" style="left:115.70px;top:825px;font-size:14.60px;line-height:22px;letter-spacing:0.030px;color:#ccc">setup.py</span>
<div style="left:83px;top:392px;width:1px;height:178px;background:#5a5a5a"></div>
<div style="left:55px;top:1064px;width:279px;height:1px;background:#3f3f3f"></div>
<svg style="left:64.9px;top:1070px" width="9" height="13" viewBox="0 0 9 13" ><path d="M1.5 1.2L7 6.5L1.5 11.8" fill="none" stroke="#c5c5c5" stroke-width="1.25" stroke-linecap="butt" stroke-linejoin="miter"/></svg>
<span class="t" style="left:82.00px;top:1067px;font-size:12.20px;line-height:20px;letter-spacing:-0.030px;color:#e0e0e0;font-weight:bold">TIMELINE</span>
<svg style="left:345.6px;top:84.6px" width="12" height="12" viewBox="0 0 24 24" ><g fill="#4a809d" stroke="#1e1e1e" stroke-width="0.35"><path d="M8.5 0.5H15.5Q17.5 0.5 17.5 2.5V9.5Q17.5 11.5 15.5 11.5H9Q6.5 11.5 6.5 14V17.5H3Q0.5 17.5 0.5 15V9Q0.5 6.5 3 6.5H12V5.5H6.5V2.5Q6.5 0.5 8.5 0.5Z"/><path d="M8.5 0.5H15.5Q17.5 0.5 17.5 2.5V9.5Q17.5 11.5 15.5 11.5H9Q6.5 11.5 6.5 14V17.5H3Q0.5 17.5 0.5 15V9Q0.5 6.5 3 6.5H12V5.5H6.5V2.5Q6.5 0.5 8.5 0.5Z" transform="rotate(180 12 12)"/></g><circle cx="9.2" cy="3.1" r="0.8" fill="#1e1e1e"/><circle cx="14.8" cy="20.9" r="0.8" fill="#1e1e1e"/></svg>
<span class="t" style="left:366.10px;top:79px;font-size:14.60px;line-height:22px;letter-spacing:0.125px;color:#fff">app.py</span>
<span class="t" style="left:417.70px;top:79px;font-size:14.60px;line-height:22px;color:#e2c08d">M</span>
<svg style="left:440.9px;top:85.7px" width="11" height="11" viewBox="0 0 11 11" ><path d="M0.6 0.6L10 10M10 0.6L0.6 10" fill="none" stroke="#fff" stroke-width="1.4" stroke-linecap="butt" stroke-linejoin="miter"/></svg>
<svg style="left:474.6px;top:84.6px" width="12" height="12" viewBox="0 0 24 24" ><g fill="#4a809d" stroke="#2d2d2d" stroke-width="0.35"><path d="M8.5 0.5H15.5Q17.5 0.5 17.5 2.5V9.5Q17.5 11.5 15.5 11.5H9Q6.5 11.5 6.5 14V17.5H3Q0.5 17.5 0.5 15V9Q0.5 6.5 3 6.5H12V5.5H6.5V2.5Q6.5 0.5 8.5 0.5Z"/><path d="M8.5 0.5H15.5Q17.5 0.5 17.5 2.5V9.5Q17.5 11.5 15.5 11.5H9Q6.5 11.5 6.5 14V17.5H3Q0.5 17.5 0.5 15V9Q0.5 6.5 3 6.5H12V5.5H6.5V2.5Q6.5 0.5 8.5 0.5Z" transform="rotate(180 12 12)"/></g><circle cx="9.2" cy="3.1" r="0.8" fill="#2d2d2d"/><circle cx="14.8" cy="20.9" r="0.8" fill="#2d2d2d"/></svg>
<span class="t" style="left:496.38px;top:79px;font-size:14.60px;line-height:22px;letter-spacing:-0.292px;transform:scaleX(0.9233);color:#959595;font-style:italic">__init__.py</span>
<svg style="left:0;top:0" width="2048" height="1114" viewBox="0 0 2048 1114"><rect x="1962.9" y="83" width="15.4" height="12.2" rx="0.8" fill="none" stroke="#c5c5c5" stroke-width="1.2" stroke-linecap="butt" stroke-linejoin="miter"/><path d="M1962.9 86.6H1978.3" fill="none" stroke="#c5c5c5" stroke-width="1.7" stroke-linecap="butt" stroke-linejoin="miter"/></svg>
<div id="code">
<div style="left:78px;top:100px;width:1470px;height:22px;background:none;border-top:1px solid #2b2b2b;border-bottom:1px solid #2b2b2b"></div>
<div class="ig" style="left:78px;top:-10px;height:964px"></div>
<div class="ig iga" style="left:113px;top:-10px;height:176px"></div>
<div class="ig" style="left:113px;top:209px;height:307px"></div>
<div class="ig" style="left:113px;top:560px;height:131px"></div>
<div class="ig" style="left:113px;top:735px;height:66px"></div>
<div class="ig" style="left:113px;top:845px;height:109px"></div>
<div class="ig" style="left:149px;top:231px;height:197px"></div>
<div class="ig" style="left:149px;top:494px;height:22px"></div>
<div class="ig" style="left:149px;top:582px;height:44px"></div>
<div class="ig" style="left:149px;top:757px;height:44px"></div>
<div class="ig" style="left:149px;top:889px;height:65px"></div>
<div class="chg" style="top:472px;height:241px"></div>
<div class="chg" style="top:910px;height:44px"></div>
<div class="ln" style="top:-9.60px">129</div>
<div class="cl" style="top:-9.60px">        <i class="k">self</i>.label.text = <i class="k">f</i><i class="s">"Rule set: </i><i class="b1">{</i><i class="k">self</i>.life_game.rule_name<i class="b1">}</i><i class="s">"</i></div>
<div class="ln" style="top:12.31px">130</div>
<div class="cl" style="top:12.31px">        <i class="k">self</i>.label.visible = <i class="k">False</i></div>
<div class="ln" style="top:34.21px">131</div>
<div class="ln" style="top:56.12px">132</div>
<div class="cl" style="top:56.12px">        pyglet.clock.schedule_interval<i class="b1">(</i><i class="k">self</i>.run, <i class="n">1</i> / <i class="k">self</i>.framerate<i class="b1">)</i></div>
<div class="ln" style="top:78.02px">133</div>
<div class="cl" style="top:78.02px">        pyglet.clock.schedule_interval<i class="b1">(</i><i class="k">self</i>.get_avg, <i class="n">1.0</i><i class="b1">)</i></div>
<div class="ln lna" style="top:99.93px">134</div>
<div class="ln" style="top:121.83px">135</div>
<div class="cl" style="top:121.83px">        <i class="k">self</i>.running = <i class="k">True</i></div>
<div class="ln" style="top:143.74px">136</div>
<div class="cl" style="top:143.74px">        <i class="k">self</i>.set_visible<i class="b1">(</i><i class="k">True</i><i class="b1">)</i></div>
<div class="ln" style="top:165.64px">137</div>
<div class="ln" style="top:187.55px">138</div>
<div class="cl" style="top:187.55px">    <i class="k">def</i> <i class="f">get_avg</i><i class="b1">(</i><i class="p">self</i>, *<i class="p">a</i><i class="b1">)</i>:</div>
<div class="ln" style="top:209.45px">139</div>
<div class="cl" style="top:209.45px">        <i class="k">self</i>.label.text = <i class="b1">(</i></div>
<div class="ln" style="top:231.36px">140</div>
<div class="cl" style="top:231.36px">            <i class="k">f</i><i class="s">"Rule set: </i><i class="b2">{</i><i class="k">self</i>.life_game.rule_name<i class="b2">}</i><i class="e">\n</i><i class="s">"</i></div>
<div class="ln" style="top:253.26px">141</div>
<div class="cl" style="top:253.26px">            <i class="k">f</i><i class="s">"New generation: </i><i class="b2">{</i><i class="k">self</i>.life_game.life_timer.avg<i class="k">:.7f</i><i class="b2">}</i><i class="e">\n</i><i class="s">"</i></div>
<div class="ln" style="top:275.16px">142</div>
<div class="cl" style="top:275.16px">            <i class="k">f</i><i class="s">"Mutation rate: </i><i class="b2">{</i><i class="k">self</i>.life_game.mutation_rate<i class="b2">}</i><i class="s">%</i><i class="e">\n</i><i class="s">"</i></div>
<div class="ln" style="top:297.07px">143</div>
<div class="cl" style="top:297.07px">            <i class="k">f</i><i class="s">"Display rendering time: </i><i class="b2">{</i><i class="k">self</i>.render_timer.avg<i class="k">:.7f</i><i class="b2">}</i><i class="e">\n</i><i class="s">"</i></div>
<div class="ln" style="top:318.98px">144</div>
<div class="cl" style="top:318.98px">            <i class="k">f</i><i class="s">"Draw time: </i><i class="b2">{</i><i class="k">self</i>.draw_timer.avg<i class="k">:.7f</i><i class="b2">}</i><i class="e">\n</i><i class="s">"</i></div>
<div class="ln" style="top:340.88px">145</div>
<div class="cl" style="top:340.88px">            <i class="k">f</i><i class="s">"Framerate: </i><i class="b2">{</i><i class="b3">(</i><i class="b1">(</i><i class="n">1</i>/<i class="n">60</i><i class="b1">)</i>/<i class="k">self</i>.life_game.life_timer.avg<i class="b3">)</i>*<i class="n">60</i><i class="k">:.2f</i><i class="b2">}</i><i class="e">\n\n</i><i class="s">"</i></div>
<div class="ln" style="top:362.78px">146</div>
<div class="cl" style="top:362.78px">            <i class="s">"Click and drag in window to reposition</i><i class="e">\n</i><i class="s">Tab: toggle HUD</i><i class="e">\n</i><i class="s">0-9: alter generation speed</i><i class="e">\n</i><i class="s">"</i></div>
<div class="ln" style="top:384.69px">147</div>
<div class="cl" style="top:384.69px">            <i class="s">"Space: randomize field</i><i class="e">\n</i><i class="s">p: Pause/unpause</i><i class="e">\n</i><i class="s">[ or ]: switch color palette</i><i class="e">\n\n</i><i class="s">"</i></div>
<div class="ln" style="top:406.60px">148</div>
<div class="cl" style="top:406.60px">            <i class="k">f</i><i class="s">"Rules: </i><i class="b2">{</i><i class="s">' | '</i>.join<i class="b3">(</i><i class="k">self</i>.life_game.rule_descriptions<i class="b3">)</i><i class="b2">}</i><i class="s">"</i></div>
<div class="ln" style="top:428.50px">149</div>
<div class="cl" style="top:428.50px">        <i class="b1">)</i></div>
<div class="ln" style="top:450.40px">150</div>
<div class="ln" style="top:472.31px">151</div>
<div class="cl" style="top:472.31px">        <i class="c">if</i> <i class="k">self</i>.label.visible:</div>
<div class="ln" style="top:494.22px">152</div>
<div class="cl" style="top:494.22px">            <i class="k">self</i>.set_underlay_size<i class="b1">()</i></div>
<div class="ln" style="top:516.12px">153</div>
<div class="ln" style="top:538.02px">154</div>
<div class="cl" style="top:538.02px">    <i class="k">def</i> <i class="f">set_underlay_size</i><i class="b1">(</i><i class="p">self</i><i class="b1">)</i>:</div>
<div class="ln" style="top:559.93px">155</div>
<div class="cl" style="top:559.93px">        <i class="k">self</i>.underlay.x, <i class="k">self</i>.underlay.y = <i class="b1">(</i></div>
<div class="ln" style="top:581.84px">156</div>
<div class="cl" style="top:581.84px">            <i class="k">self</i>.label.x,</div>
<div class="ln" style="top:603.74px">157</div>
<div class="cl" style="top:603.74px">            <i class="k">self</i>.label.y - <i class="k">self</i>.label.content_height,</div>
<div class="ln" style="top:625.64px">158</div>
<div class="cl" style="top:625.64px">        <i class="b1">)</i></div>
<div class="ln" style="top:647.55px">159</div>
<div class="cl" style="top:647.55px">        <i class="k">self</i>.underlay.width = <i class="k">self</i>.label.content_width</div>
<div class="ln" style="top:669.46px">160</div>
<div class="cl" style="top:669.46px">        <i class="k">self</i>.underlay.height = <i class="k">self</i>.label.content_height</div>
<div class="ln" style="top:691.36px">161</div>
<div class="ln" style="top:713.26px">162</div>
<div class="cl" style="top:713.26px">    <i class="k">def</i> <i class="f">on_mouse_drag</i><i class="b1">(</i><i class="p">self</i>, <i class="p">x</i>, <i class="p">y</i>, <i class="p">dx</i>, <i class="p">dy</i>, *<i class="p">a</i><i class="b1">)</i>:</div>
<div class="ln" style="top:735.17px">163</div>
<div class="cl" style="top:735.17px">        <i class="c">for</i> _ <i class="c">in</i> <i class="k">self</i>.sprites:</div>
<div class="ln" style="top:757.08px">164</div>
<div class="cl" style="top:757.08px">            _.x = <i class="b1">(</i><i class="b2">(</i>_.x + dx<i class="b2">)</i> % <i class="b2">(</i>WIDTH * ZOOM * <i class="n">2</i><i class="b2">)</i><i class="b1">)</i> - WIDTH * ZOOM</div>
<div class="ln" style="top:778.98px">165</div>
<div class="cl" style="top:778.98px">            _.y = <i class="b1">(</i><i class="b2">(</i>_.y + dy<i class="b2">)</i> % <i class="b2">(</i>HEIGHT * ZOOM * <i class="n">2</i><i class="b2">)</i><i class="b1">)</i> - HEIGHT * ZOOM</div>
<div class="ln" style="top:800.88px">166</div>
<div class="ln" style="top:822.79px">167</div>
<div class="cl" style="top:822.79px">    <i class="k">def</i> <i class="f">on_key_press</i><i class="b1">(</i><i class="p">self</i>, <i class="p">symbol</i>, <i class="p">modifiers</i><i class="b1">)</i>:</div>
<div class="ln" style="top:844.70px">168</div>
<div class="cl" style="top:844.70px">        <i class="f">print</i><i class="b1">(</i>symbol, modifiers<i class="b1">)</i></div>
<div class="ln" style="top:866.60px">169</div>
<div class="cl" style="top:866.60px">        <i class="c">if</i> symbol == <i class="n">65289</i>:</div>
<div class="ln" style="top:888.50px">170</div>
<div class="cl" style="top:888.50px">            <i class="k">self</i>.label.visible = <i class="k">not</i> <i class="k">self</i>.label.visible</div>
<div class="ln" style="top:910.41px">171</div>
<div class="cl" style="top:910.41px">            <i class="k">self</i>.underlay.visible = <i class="k">self</i>.label.visible</div>
<div class="ln" style="top:932.32px">172</div>
<div class="cl" style="top:932.32px">            <i class="k">self</i>.get_avg<i class="b1">()</i></div>
<svg style="left:0;top:0" width="1660" height="956" viewBox="0 0 1660 956" fill="none" stroke-width="1.25">
<path stroke="#72526f" d="M1554.0 2.0h4.7M1554.0 5.2h3.2M1565.8 5.2h4.7M1554.0 6.8h3.2M1568.2 6.8h4.7M1554.0 8.4h3.2M1563.5 8.4h4.7M1554.0 10.0h3.2M1569.0 10.0h4.7M1554.0 13.2h3.2M1563.5 13.2h4.7M1554.0 14.8h3.2M1564.3 14.8h4.7M1554.0 16.4h3.2M1563.5 16.4h4.7M1554.0 18.0h3.2M1566.6 18.0h4.7M1554.0 19.6h3.2M1562.7 19.6h4.7M1554.0 22.8h4.7M1554.0 24.4h4.7M1554.0 26.0h3.2M1563.5 26.0h4.7M1560.3 42.0h2.4M1560.3 45.2h4.7M1563.5 46.8h3.2M1560.3 48.4h2.4M1563.5 50.0h2.4M1563.5 53.2h4.7M1566.6 54.8h3.2M1560.3 58.0h1.6M1563.5 59.6h4.0M1598.2 83.6h1.6M1609.3 83.6h3.2M1592.7 85.2h2.4M1597.5 85.2h1.6M1560.3 106.0h2.4M1567.4 106.0h1.6M1560.3 110.8h3.2M1560.3 114.0h4.7M1560.3 184.4h2.4M1565.1 184.4h1.6M1560.3 242.0h1.6M1560.3 261.2h2.4M1565.1 261.2h1.6M1560.3 270.8h1.6M1560.3 277.2h3.2M1563.5 282.0h3.2M1566.6 285.2h1.6M1560.3 291.6h3.2M1563.5 301.2h1.6M1560.3 304.4h3.2M1563.5 307.6h1.6M1560.3 310.8h1.6M1568.2 310.8h1.6M1582.4 312.4h1.6M1560.3 317.2h3.2M1563.5 322.0h3.2M1560.3 328.4h4.7M1560.3 342.8h3.2M1560.3 360.4h2.4M1565.1 360.4h1.6M1557.2 378.0h4.7"/>
<path stroke="#828282" d="M1559.5 2.0h4.7M1558.0 5.2h4.7M1562.7 5.2h0.8M1563.5 5.2h1.6M1571.4 5.2h7.9M1558.0 6.8h4.7M1562.7 6.8h0.8M1563.5 6.8h4.0M1573.8 6.8h7.1M1580.9 6.8h0.8M1582.4 6.8h3.2M1558.0 8.4h4.7M1569.0 8.4h4.7M1573.8 8.4h0.8M1575.3 8.4h3.2M1558.0 10.0h4.7M1562.7 10.0h0.8M1563.5 10.0h4.7M1574.5 10.0h2.4M1576.9 10.0h0.8M1578.5 10.0h4.0M1582.4 10.0h0.8M1584.0 10.0h7.9M1593.5 10.0h0.8M1595.1 10.0h3.2M1598.2 10.0h0.8M1599.8 10.0h2.4M1558.0 13.2h0.8M1558.7 13.2h4.0M1569.0 13.2h4.0M1558.0 14.8h0.8M1558.7 14.8h4.7M1569.8 14.8h6.3M1576.1 14.8h0.8M1577.7 14.8h0.8M1558.0 16.4h0.8M1558.7 16.4h4.0M1569.0 16.4h1.6M1558.0 18.0h0.8M1558.7 18.0h7.1M1572.2 18.0h0.8M1558.0 19.6h0.8M1558.7 19.6h3.2M1568.2 19.6h3.2M1559.5 22.8h4.0M1559.5 24.4h1.6M1558.0 26.0h4.7M1569.0 26.0h5.5M1565.1 30.8h0.8M1570.6 32.4h0.8M1576.1 32.4h0.8M1580.1 32.4h0.8M1586.4 32.4h0.8M1590.3 32.4h0.8M1595.9 32.4h0.8M1600.6 32.4h0.8M1602.2 32.4h0.8M1607.7 32.4h1.6M1614.8 32.4h0.8M1617.2 32.4h0.8M1563.5 34.0h0.8M1564.3 34.0h4.0M1568.2 34.0h0.8M1569.8 34.0h2.4M1573.0 34.0h0.8M1574.5 34.0h4.0M1563.5 35.6h0.8M1564.3 35.6h4.7M1569.0 35.6h0.8M1570.6 35.6h2.4M1573.8 35.6h0.8M1575.3 35.6h4.7M1586.4 35.6h0.8M1587.2 35.6h4.0M1591.9 35.6h0.8M1563.5 38.8h0.8M1564.3 38.8h4.0M1569.0 38.8h0.8M1570.6 38.8h4.0M1562.7 42.0h0.8M1566.6 43.6h0.8M1567.4 43.6h7.1M1575.3 43.6h4.0M1579.3 43.6h0.8M1580.9 43.6h4.7M1585.6 43.6h0.8M1565.8 45.2h6.3M1572.2 45.2h0.8M1562.7 48.4h0.8M1565.8 50.0h0.8M1569.8 51.6h0.8M1570.6 51.6h3.2M1574.5 51.6h0.8M1576.1 51.6h7.9M1584.8 51.6h4.0M1588.8 51.6h0.8M1590.3 51.6h4.7M1569.0 53.2h8.7M1577.7 53.2h0.8M1565.8 58.0h0.8M1566.6 58.0h3.2M1570.6 58.0h1.6M1576.1 58.0h0.8M1568.2 59.6h9.5M1563.5 66.0h0.8M1564.3 66.0h13.4M1578.5 66.0h0.8M1563.5 69.2h0.8M1564.3 69.2h10.3M1575.3 69.2h0.8M1576.9 69.2h3.2M1560.3 72.4h0.8M1561.1 72.4h6.3M1576.9 72.4h0.8M1581.7 72.4h0.8M1582.4 72.4h7.9M1563.5 75.6h0.8M1564.3 75.6h4.0M1569.0 75.6h0.8M1563.5 77.2h0.8M1564.3 77.2h4.0M1569.0 77.2h0.8M1563.5 80.4h0.8M1564.3 80.4h7.9M1573.0 80.4h0.8M1574.5 80.4h4.0M1579.3 80.4h2.4M1581.7 80.4h0.8M1563.5 82.0h0.8M1564.3 82.0h4.0M1569.0 82.0h0.8M1571.4 82.0h4.0M1575.3 82.0h0.8M1576.1 82.0h4.0M1583.2 82.0h0.8M1588.0 82.0h0.8M1589.5 82.0h4.0M1594.3 82.0h0.8M1595.9 82.0h4.7M1601.4 82.0h0.8M1563.5 83.6h0.8M1564.3 83.6h4.0M1571.4 83.6h0.8M1573.0 83.6h4.0M1576.9 83.6h0.8M1577.7 83.6h4.0M1584.8 83.6h0.8M1589.5 83.6h0.8M1590.3 83.6h4.0M1603.8 83.6h0.8M1604.6 83.6h4.0M1563.5 85.2h0.8M1564.3 85.2h4.7M1569.8 85.2h0.8M1572.2 85.2h4.0M1576.1 85.2h0.8M1576.9 85.2h4.0M1584.0 85.2h0.8M1588.8 85.2h0.8M1595.9 85.2h0.8M1599.8 85.2h4.0M1605.3 85.2h0.8M1610.1 85.2h0.8M1614.8 85.2h0.8M1615.6 85.2h4.0M1563.5 86.8h0.8M1564.3 86.8h7.1M1575.3 86.8h0.8M1576.1 86.8h4.0M1582.4 86.8h0.8M1571.4 90.0h0.8M1580.1 90.0h0.8M1584.8 90.0h0.8M1563.5 91.6h0.8M1564.3 91.6h7.1M1572.2 91.6h0.8M1573.8 91.6h7.1M1566.6 93.2h0.8M1567.4 93.2h7.1M1574.5 93.2h0.8M1575.3 93.2h7.1M1583.2 93.2h0.8M1584.8 93.2h4.0M1588.8 93.2h0.8M1589.5 93.2h2.4M1592.7 93.2h7.1M1599.8 93.2h0.8M1568.2 98.0h0.8M1563.5 99.6h0.8M1564.3 99.6h7.9M1572.2 99.6h0.8M1573.0 99.6h2.4M1579.3 99.6h0.8M1580.1 99.6h7.9M1568.2 102.8h0.8M1560.3 104.4h0.8M1561.9 104.4h0.8M1566.6 104.4h0.8M1567.4 104.4h4.0M1571.4 104.4h0.8M1576.1 104.4h0.8M1576.9 104.4h4.0M1563.5 106.0h0.8M1564.3 106.0h0.8M1565.8 106.0h0.8M1569.8 106.0h2.4M1573.0 106.0h4.0M1578.5 106.0h0.8M1581.7 106.0h0.8M1586.4 106.0h0.8M1587.2 106.0h0.8M1588.8 106.0h0.8M1566.6 107.6h0.8M1567.4 107.6h4.7M1573.0 107.6h0.8M1575.3 107.6h0.8M1577.7 107.6h0.8M1579.3 107.6h0.8M1583.2 107.6h0.8M1588.0 107.6h0.8M1589.5 107.6h0.8M1566.6 109.2h0.8M1567.4 109.2h4.0M1572.2 109.2h0.8M1576.9 109.2h0.8M1577.7 109.2h4.0M1563.5 110.8h0.8M1568.2 110.8h0.8M1569.0 110.8h0.8M1566.6 112.4h0.8M1567.4 112.4h4.0M1572.2 112.4h0.8M1576.9 112.4h0.8M1577.7 112.4h4.0M1582.4 112.4h0.8M1569.0 114.0h0.8M1569.8 114.0h0.8M1566.6 118.8h18.2M1570.6 120.4h0.8M1572.2 120.4h0.8M1573.8 120.4h0.8M1575.3 120.4h1.6M1579.3 120.4h0.8M1560.3 122.0h4.0M1565.8 122.0h0.8M1566.6 122.0h6.3M1573.8 122.0h0.8M1574.5 122.0h0.8M1575.3 122.0h0.8M1576.9 122.0h5.5M1582.4 122.0h0.8M1587.2 122.0h0.8M1588.8 122.0h0.8M1589.5 122.0h0.8M1590.3 122.0h1.6M1563.5 125.2h0.8M1564.3 125.2h7.9M1573.0 125.2h0.8M1574.5 125.2h4.0M1563.5 126.8h0.8M1564.3 126.8h8.7M1573.8 126.8h0.8M1575.3 126.8h4.0M1563.5 128.4h0.8M1564.3 128.4h10.3M1575.3 128.4h0.8M1576.9 128.4h3.2M1563.5 131.6h0.8M1564.3 131.6h7.1M1572.2 131.6h0.8M1573.8 131.6h7.1M1563.5 133.2h0.8M1564.3 133.2h3.2M1568.2 133.2h0.8M1569.8 133.2h2.4M1563.5 144.4h0.8M1564.3 144.4h4.0M1569.0 144.4h0.8M1570.6 144.4h4.7M1575.3 144.4h0.8M1576.1 144.4h6.3M1582.4 144.4h0.8M1583.2 144.4h4.0M1563.5 146.0h0.8M1564.3 146.0h5.5M1570.6 146.0h0.8M1572.2 146.0h4.7M1576.9 146.0h0.8M1577.7 146.0h4.0M1581.7 146.0h0.8M1582.4 146.0h5.5M1588.0 146.0h0.8M1588.8 146.0h0.8M1563.5 147.6h0.8M1564.3 147.6h7.1M1572.2 147.6h0.8M1573.8 147.6h6.3M1580.9 147.6h4.0M1584.8 147.6h0.8M1586.4 147.6h4.7M1591.1 147.6h0.8M1592.7 147.6h4.0M1596.7 147.6h0.8M1563.5 150.8h0.8M1564.3 150.8h4.0M1569.0 150.8h0.8M1570.6 150.8h4.7M1575.3 150.8h0.8M1576.1 150.8h3.2M1579.3 150.8h0.8M1580.1 150.8h4.0M1588.0 150.8h0.8M1588.8 150.8h3.2M1565.1 152.4h0.8M1564.3 154.0h0.8M1564.3 155.6h0.8M1564.3 157.2h0.8M1563.5 158.8h7.1M1570.6 158.8h0.8M1571.4 158.8h1.6M1573.0 158.8h0.8M1574.5 158.8h0.8M1575.3 158.8h0.8M1576.9 158.8h0.8M1563.5 160.4h4.0M1567.4 160.4h0.8M1571.4 160.4h0.8M1572.2 160.4h5.5M1577.7 160.4h0.8M1563.5 163.6h0.8M1564.3 163.6h11.1M1576.1 163.6h0.8M1577.7 163.6h4.0M1563.5 166.8h0.8M1564.3 166.8h6.3M1571.4 166.8h0.8M1573.0 166.8h4.7M1577.7 166.8h0.8M1578.5 166.8h4.7M1583.2 166.8h0.8M1584.0 166.8h0.8M1564.3 168.4h0.8M1563.5 170.0h0.8M1566.6 171.6h0.8M1567.4 171.6h4.0M1571.4 171.6h0.8M1572.2 171.6h0.8M1573.0 171.6h0.8M1563.5 173.2h0.8M1564.3 173.2h0.8M1570.6 173.2h0.8M1563.5 174.8h4.0M1567.4 174.8h0.8M1569.8 174.8h0.8M1572.2 174.8h0.8M1575.3 174.8h0.8M1563.5 176.4h0.8M1564.3 176.4h0.8M1565.8 176.4h0.8M1567.4 176.4h0.8M1568.2 176.4h0.8M1569.8 176.4h0.8M1571.4 176.4h0.8M1572.2 176.4h0.8M1573.8 176.4h0.8M1563.5 178.0h4.0M1567.4 178.0h0.8M1571.4 178.0h0.8M1572.2 178.0h4.0M1576.1 178.0h0.8M1577.7 178.0h0.8M1578.5 178.0h0.8M1580.1 178.0h0.8M1563.5 179.6h4.0M1567.4 179.6h0.8M1571.4 179.6h0.8M1572.2 179.6h1.6M1573.8 179.6h0.8M1575.3 179.6h5.5M1580.9 179.6h0.8M1584.0 179.6h0.8M1563.5 184.4h0.8M1567.4 184.4h4.0M1573.8 184.4h0.8M1566.6 186.0h0.8M1567.4 186.0h5.5M1563.5 187.6h4.7M1568.2 187.6h0.8M1569.0 187.6h4.7M1573.8 187.6h0.8M1574.5 187.6h4.7M1583.2 187.6h0.8M1584.0 187.6h5.5M1589.5 187.6h0.8M1591.9 187.6h0.8M1594.3 187.6h0.8M1595.9 187.6h4.0M1599.8 187.6h0.8M1603.8 187.6h0.8M1604.6 187.6h4.0M1608.5 187.6h0.8M1610.1 187.6h0.8M1610.9 187.6h0.8M1611.7 187.6h0.8M1566.6 189.2h4.7M1571.4 189.2h0.8M1572.2 189.2h0.8M1566.6 190.8h0.8M1567.4 190.8h5.5M1573.0 190.8h0.8M1573.8 190.8h4.7M1579.3 190.8h4.7M1563.5 194.0h0.8M1564.3 194.0h9.5M1574.5 194.0h0.8M1576.1 194.0h4.0M1580.9 194.0h2.4M1583.2 194.0h0.8M1563.5 195.6h0.8M1564.3 195.6h7.9M1573.0 195.6h0.8M1574.5 195.6h4.0M1579.3 195.6h2.4M1581.7 195.6h0.8M1563.5 197.2h0.8M1564.3 197.2h8.7M1573.8 197.2h0.8M1575.3 197.2h4.0M1580.1 197.2h2.4M1582.4 197.2h0.8M1563.5 198.8h0.8M1564.3 198.8h8.7M1573.8 198.8h0.8M1575.3 198.8h4.0M1580.1 198.8h2.4M1582.4 198.8h0.8M1563.5 202.0h0.8M1564.3 202.0h10.3M1575.3 202.0h0.8M1563.5 205.2h0.8M1564.3 205.2h2.4M1567.4 205.2h0.8M1569.0 205.2h7.9M1580.9 205.2h0.8M1582.4 205.2h4.0M1586.4 205.2h0.8M1590.3 205.2h0.8M1594.3 205.2h0.8M1598.2 205.2h0.8M1603.0 205.2h0.8M1604.6 205.2h0.8M1605.3 205.2h0.8M1563.5 206.8h0.8M1564.3 206.8h4.0M1568.2 206.8h0.8M1569.0 206.8h3.2M1573.0 206.8h0.8M1588.0 206.8h0.8M1588.8 206.8h7.1M1595.9 206.8h0.8M1596.7 206.8h7.1M1563.5 208.4h0.8M1564.3 208.4h4.0M1568.2 208.4h0.8M1569.0 208.4h5.5M1575.3 208.4h0.8M1560.3 211.6h4.7M1565.1 211.6h0.8M1565.8 211.6h4.0M1569.8 211.6h0.8M1570.6 211.6h13.4M1588.0 211.6h0.8M1588.8 211.6h2.4M1591.1 211.6h0.8M1594.3 211.6h0.8M1599.0 211.6h0.8M1599.8 211.6h7.1M1560.3 213.2h4.7M1565.1 213.2h0.8M1565.8 213.2h4.0M1569.8 213.2h0.8M1570.6 213.2h13.4M1588.0 213.2h0.8M1588.8 213.2h5.5M1594.3 213.2h0.8M1563.5 216.4h0.8M1564.3 216.4h5.5M1570.6 216.4h0.8M1563.5 218.0h0.8M1564.3 218.0h8.7M1569.8 221.2h0.8M1571.4 221.2h0.8M1573.8 221.2h0.8M1563.5 222.8h0.8M1564.3 222.8h4.0M1568.2 222.8h0.8M1569.0 222.8h3.2M1573.0 222.8h0.8M1576.9 224.4h0.8M1577.7 224.4h7.1M1584.8 224.4h0.8M1585.6 224.4h7.1M1581.7 226.0h0.8M1582.4 226.0h7.1M1589.5 226.0h0.8M1590.3 226.0h7.9M1598.2 226.0h0.8M1599.0 226.0h2.4M1580.9 227.6h0.8M1581.7 227.6h7.1M1588.8 227.6h0.8M1589.5 227.6h10.3M1588.0 229.2h0.8M1588.8 229.2h9.5M1598.2 229.2h0.8M1599.0 229.2h2.4M1577.7 230.8h0.8M1578.5 230.8h7.9M1586.4 230.8h0.8M1587.2 230.8h2.4M1576.9 232.4h0.8M1580.1 232.4h0.8M1584.0 232.4h0.8M1584.8 232.4h7.1M1591.9 232.4h0.8M1592.7 232.4h7.9M1600.6 232.4h0.8M1601.4 232.4h2.4M1604.6 232.4h0.8M1575.3 237.2h0.8M1576.1 237.2h3.2M1583.2 237.2h0.8M1584.0 237.2h7.1M1591.1 237.2h0.8M1591.9 237.2h13.4M1565.8 242.0h0.8M1566.6 242.0h4.0M1570.6 242.0h0.8M1571.4 242.0h5.5M1576.9 242.0h0.8M1566.6 243.6h0.8M1567.4 243.6h13.4M1578.5 246.8h0.8M1563.5 248.4h0.8M1564.3 248.4h6.3M1570.6 248.4h0.8M1571.4 248.4h0.8M1572.2 248.4h0.8M1576.9 248.4h0.8M1577.7 248.4h6.3M1584.0 248.4h0.8M1584.8 248.4h0.8M1586.4 248.4h0.8M1566.6 250.0h0.8M1567.4 250.0h4.0M1571.4 250.0h0.8M1572.2 250.0h0.8M1573.0 250.0h0.8M1566.6 251.6h0.8M1567.4 251.6h4.0M1571.4 251.6h0.8M1572.2 251.6h0.8M1573.8 251.6h0.8M1578.5 251.6h0.8M1579.3 251.6h4.0M1583.2 251.6h0.8M1584.0 251.6h11.1M1595.1 251.6h0.8M1563.5 254.8h0.8M1564.3 254.8h6.3M1570.6 254.8h0.8M1571.4 254.8h4.0M1576.1 254.8h0.8M1580.9 254.8h0.8M1581.7 254.8h4.0M1585.6 254.8h0.8M1586.4 254.8h10.3M1563.5 256.4h0.8M1564.3 256.4h6.3M1570.6 256.4h0.8M1571.4 256.4h4.7M1576.9 256.4h0.8M1581.7 256.4h0.8M1582.4 256.4h4.0M1586.4 256.4h0.8M1587.2 256.4h11.1M1574.5 259.6h0.8M1576.9 259.6h0.8M1579.3 259.6h0.8M1582.4 259.6h0.8M1585.6 259.6h0.8M1587.2 259.6h0.8M1589.5 259.6h0.8M1563.5 261.2h0.8M1570.6 261.2h0.8M1571.4 261.2h5.5M1576.9 261.2h0.8M1563.5 262.8h0.8M1564.3 262.8h0.8M1565.1 262.8h0.8M1566.6 262.8h0.8M1569.8 262.8h0.8M1570.6 262.8h0.8M1571.4 262.8h0.8M1573.0 262.8h0.8M1574.5 262.8h1.6M1577.7 262.8h0.8M1580.1 262.8h4.0M1584.8 262.8h0.8M1586.4 262.8h3.2M1590.3 262.8h0.8M1595.1 262.8h0.8M1596.7 262.8h4.0M1601.4 262.8h0.8M1603.0 262.8h3.2M1563.5 264.4h0.8M1564.3 264.4h0.8M1565.1 264.4h0.8M1566.6 264.4h0.8M1569.8 264.4h0.8M1570.6 264.4h0.8M1571.4 264.4h0.8M1573.0 264.4h0.8M1574.5 264.4h1.6M1577.7 264.4h0.8M1580.1 264.4h4.7M1585.6 264.4h0.8M1587.2 264.4h3.2M1591.1 264.4h0.8M1595.9 264.4h0.8M1597.5 264.4h4.7M1603.0 264.4h0.8M1604.6 264.4h3.2M1573.8 267.6h0.8M1580.1 267.6h0.8M1589.5 267.6h0.8M1565.1 269.2h4.7M1569.8 269.2h0.8M1571.4 269.2h7.1M1562.7 270.8h4.7M1568.2 270.8h0.8M1569.0 270.8h0.8M1574.5 270.8h0.8M1566.6 272.4h0.8M1567.4 272.4h4.0M1571.4 272.4h0.8M1572.2 272.4h5.5M1578.5 272.4h0.8M1586.4 272.4h0.8M1587.2 272.4h4.0M1591.1 272.4h0.8M1591.9 272.4h5.5M1566.6 274.0h0.8M1567.4 274.0h6.3M1573.8 274.0h0.8M1574.5 274.0h5.5M1580.9 274.0h0.8M1585.6 274.0h0.8M1586.4 274.0h4.0M1590.3 274.0h0.8M1591.1 274.0h5.5M1566.6 275.6h0.8M1567.4 275.6h5.5M1564.3 277.2h4.7M1569.8 277.2h0.8M1570.6 277.2h0.8M1572.2 277.2h2.4M1574.5 277.2h0.8M1575.3 277.2h4.0M1579.3 277.2h0.8M1566.6 278.8h0.8M1567.4 278.8h2.4M1569.8 280.4h0.8M1570.6 280.4h7.1M1577.7 280.4h0.8M1578.5 280.4h7.1M1589.5 280.4h0.8M1590.3 280.4h7.1M1597.5 280.4h0.8M1598.2 280.4h4.0M1604.6 280.4h0.8M1566.6 282.0h0.8M1569.8 283.6h0.8M1570.6 283.6h7.1M1577.7 283.6h0.8M1578.5 283.6h10.3M1589.5 283.6h0.8M1591.1 283.6h2.4M1594.3 283.6h6.3M1601.4 283.6h0.8M1603.8 283.6h0.8M1605.3 283.6h2.4M1569.0 285.2h7.1M1576.9 285.2h0.8M1579.3 285.2h0.8M1573.0 286.8h0.8M1573.8 286.8h4.0M1577.7 286.8h0.8M1578.5 286.8h3.2M1582.4 286.8h0.8M1587.2 286.8h0.8M1588.0 286.8h5.5M1569.8 288.4h4.7M1574.5 288.4h0.8M1575.3 288.4h4.0M1579.3 288.4h0.8M1580.1 288.4h10.3M1594.3 288.4h0.8M1595.1 288.4h3.2M1598.2 288.4h0.8M1602.2 288.4h0.8M1606.9 288.4h0.8M1607.7 288.4h4.0M1611.7 288.4h0.8M1612.5 288.4h5.5M1566.6 291.6h0.8M1567.4 291.6h0.8M1569.0 291.6h4.7M1574.5 291.6h0.8M1575.3 291.6h0.8M1578.5 291.6h0.8M1566.6 293.2h0.8M1567.4 293.2h7.1M1575.3 293.2h0.8M1579.3 293.2h0.8M1563.5 294.8h4.0M1568.2 294.8h0.8M1569.8 294.8h4.7M1575.3 294.8h0.8M1583.2 294.8h0.8M1588.0 294.8h0.8M1588.8 294.8h7.1M1596.7 294.8h0.8M1598.2 294.8h7.1M1606.1 294.8h0.8M1607.7 294.8h4.0M1612.5 294.8h0.8M1569.8 296.4h0.8M1570.6 296.4h2.4M1563.5 299.6h4.7M1568.2 299.6h0.8M1569.0 299.6h4.0M1573.0 299.6h0.8M1573.8 299.6h7.9M1585.6 299.6h0.8M1586.4 299.6h2.4M1589.5 299.6h0.8M1591.1 299.6h4.7M1595.9 299.6h0.8M1596.7 299.6h4.0M1600.6 299.6h0.8M1601.4 299.6h13.4M1569.0 301.2h0.8M1569.8 301.2h5.5M1575.3 301.2h0.8M1569.8 302.8h0.8M1570.6 302.8h5.5M1564.3 304.4h4.7M1569.8 304.4h0.8M1570.6 304.4h0.8M1574.5 304.4h0.8M1566.6 306.0h0.8M1567.4 306.0h5.5M1573.8 306.0h0.8M1581.7 306.0h0.8M1582.4 306.0h2.4M1569.0 307.6h0.8M1569.8 307.6h5.5M1575.3 307.6h0.8M1569.8 309.2h0.8M1570.6 309.2h2.4M1562.7 310.8h4.7M1570.6 310.8h1.6M1572.2 310.8h0.8M1566.6 312.4h0.8M1567.4 312.4h10.3M1578.5 312.4h0.8M1579.3 312.4h0.8M1584.8 312.4h2.4M1569.8 314.0h0.8M1570.6 314.0h10.3M1581.7 314.0h0.8M1582.4 314.0h0.8M1584.0 314.0h2.4M1587.2 314.0h5.5M1569.8 315.6h0.8M1570.6 315.6h4.7M1576.1 315.6h0.8M1577.7 315.6h6.3M1588.0 315.6h0.8M1588.8 315.6h4.0M1563.5 317.2h0.8M1566.6 318.8h0.8M1567.4 318.8h4.0M1572.2 318.8h0.8M1569.8 320.4h0.8M1570.6 320.4h2.4M1567.4 322.0h7.1M1575.3 322.0h0.8M1577.7 322.0h0.8M1569.8 323.6h0.8M1570.6 323.6h10.3M1581.7 323.6h0.8M1582.4 323.6h0.8M1584.8 323.6h0.8M1589.5 323.6h0.8M1590.3 323.6h0.8M1566.6 325.2h4.7M1571.4 325.2h0.8M1572.2 325.2h4.0M1576.1 325.2h0.8M1576.9 325.2h10.3M1591.1 325.2h0.8M1591.9 325.2h3.2M1595.1 325.2h0.8M1599.0 325.2h0.8M1603.8 325.2h0.8M1604.6 325.2h4.0M1608.5 325.2h0.8M1609.3 325.2h5.5M1565.8 328.4h4.0M1571.4 328.4h0.8M1572.2 328.4h9.5M1582.4 328.4h4.7M1587.2 328.4h0.8M1588.8 328.4h7.1M1566.6 331.6h0.8M1568.2 331.6h0.8M1570.6 331.6h0.8M1563.5 333.2h0.8M1564.3 333.2h7.1M1571.4 333.2h0.8M1572.2 333.2h3.2M1563.5 334.8h0.8M1564.3 334.8h7.1M1571.4 334.8h0.8M1572.2 334.8h3.2M1570.6 338.0h0.8M1563.5 339.6h0.8M1564.3 339.6h4.0M1569.8 339.6h0.8M1574.5 339.6h0.8M1575.3 339.6h0.8M1567.4 342.8h0.8M1568.2 342.8h7.9M1576.1 342.8h0.8M1566.6 344.4h0.8M1567.4 344.4h4.0M1571.4 344.4h0.8M1572.2 344.4h3.2M1563.5 347.6h0.8M1564.3 347.6h5.5M1569.8 347.6h0.8M1570.6 347.6h7.1M1563.5 349.2h7.1M1574.5 349.2h0.8M1575.3 349.2h0.8M1576.1 349.2h0.8M1580.9 349.2h0.8M1581.7 349.2h0.8M1582.4 349.2h0.8M1571.4 350.8h0.8M1576.1 350.8h0.8M1576.9 350.8h4.7M1581.7 350.8h0.8M1586.4 350.8h0.8M1587.2 350.8h7.1M1594.3 350.8h0.8M1595.1 350.8h4.0M1599.8 350.8h0.8M1602.2 350.8h0.8M1606.9 350.8h0.8M1564.3 352.4h0.8M1564.3 354.0h0.8M1564.3 355.6h0.8M1564.3 357.2h0.8M1563.5 360.4h0.8M1570.6 360.4h0.8M1571.4 360.4h5.5M1576.9 360.4h0.8M1563.5 362.0h0.8M1564.3 362.0h0.8M1565.1 362.0h4.0M1569.8 362.0h0.8M1574.5 362.0h0.8M1563.5 363.6h0.8M1564.3 363.6h0.8M1565.1 363.6h4.7M1573.8 363.6h0.8M1574.5 363.6h0.8M1566.6 365.2h0.8M1567.4 365.2h2.4M1569.8 365.2h0.8M1570.6 365.2h3.2M1577.7 365.2h0.8M1578.5 365.2h0.8M1561.9 370.0h0.8M1557.2 371.6h0.8M1558.7 371.6h0.8M1560.3 371.6h7.9M1569.0 371.6h4.0M1573.8 371.6h0.8M1575.3 371.6h3.2M1578.5 371.6h0.8M1580.1 371.6h4.7M1585.6 371.6h0.8M1587.2 371.6h3.2M1590.3 371.6h0.8M1591.9 371.6h4.0M1595.9 371.6h0.8M1599.8 371.6h0.8M1557.2 373.2h0.8M1558.0 373.2h0.8M1558.7 373.2h6.3M1560.3 374.8h4.7M1565.1 374.8h0.8M1565.8 374.8h4.0M1569.8 374.8h0.8M1570.6 374.8h3.2M1584.8 374.8h0.8M1586.4 374.8h4.7M1591.1 374.8h0.8M1591.9 374.8h4.0M1595.9 374.8h0.8M1596.7 374.8h3.2M1610.9 374.8h0.8M1615.6 374.8h0.8M1618.0 374.8h0.8M1562.7 378.0h0.8M1565.1 381.2h0.8M1557.2 382.8h3.2M1561.9 382.8h0.8M1562.7 382.8h2.4"/>
<path stroke="#3a5d7a" d="M1554.0 30.8h4.0M1557.2 32.4h2.4M1560.3 34.0h3.2M1560.3 35.6h3.2M1580.9 35.6h1.6M1583.2 35.6h3.2M1560.3 38.8h3.2M1563.5 43.6h3.2M1566.6 51.6h3.2M1562.7 58.0h3.2M1573.0 58.0h3.2M1560.3 66.0h3.2M1560.3 69.2h3.2M1578.5 72.4h3.2M1560.3 75.6h3.2M1560.3 77.2h3.2M1560.3 80.4h3.2M1582.4 80.4h3.2M1560.3 82.0h3.2M1603.0 82.0h3.2M1560.3 83.6h3.2M1586.4 83.6h3.2M1600.6 83.6h3.2M1613.2 83.6h3.2M1560.3 85.2h3.2M1611.7 85.2h3.2M1560.3 86.8h3.2M1572.2 86.8h3.2M1557.2 90.0h2.4M1560.3 91.6h3.2M1581.7 91.6h1.6M1563.5 93.2h3.2M1557.2 98.0h2.4M1560.3 99.6h3.2M1576.1 99.6h3.2M1557.2 102.8h2.4M1563.5 104.4h3.2M1573.0 104.4h3.2M1583.2 106.0h3.2M1563.5 107.6h3.2M1585.6 107.6h1.6M1563.5 109.2h3.2M1573.8 109.2h3.2M1565.1 110.8h3.2M1563.5 112.4h3.2M1573.8 112.4h3.2M1565.8 114.0h3.2M1554.0 118.8h4.0M1557.2 120.4h2.4M1583.2 122.0h4.0M1560.3 125.2h3.2M1560.3 126.8h3.2M1560.3 128.4h3.2M1560.3 131.6h3.2M1560.3 133.2h3.2M1560.3 144.4h3.2M1560.3 146.0h3.2M1560.3 147.6h3.2M1560.3 150.8h3.2M1584.8 150.8h3.2M1568.2 160.4h3.2M1560.3 163.6h3.2M1560.3 166.8h3.2M1563.5 171.6h3.2M1568.2 178.0h3.2M1568.2 179.6h3.2M1563.5 186.0h3.2M1580.1 187.6h3.2M1600.6 187.6h3.2M1563.5 190.8h3.2M1560.3 194.0h3.2M1584.0 194.0h3.2M1560.3 195.6h3.2M1582.4 195.6h3.2M1560.3 197.2h3.2M1583.2 197.2h3.2M1560.3 198.8h3.2M1583.2 198.8h3.2M1560.3 202.0h3.2M1560.3 205.2h3.2M1577.7 205.2h3.2M1560.3 206.8h3.2M1574.5 206.8h0.8M1584.8 206.8h3.2M1560.3 208.4h3.2M1576.9 208.4h4.0M1584.8 211.6h3.2M1595.9 211.6h3.2M1584.8 213.2h3.2M1560.3 216.4h3.2M1572.2 216.4h3.2M1560.3 218.0h3.2M1573.8 218.0h3.2M1557.2 221.2h2.4M1560.3 222.8h3.2M1563.5 224.4h0.8M1573.8 224.4h3.2M1563.5 226.0h0.8M1578.5 226.0h3.2M1601.4 226.0h3.2M1563.5 227.6h0.8M1577.7 227.6h3.2M1563.5 229.2h0.8M1584.8 229.2h3.2M1601.4 229.2h3.2M1563.5 230.8h0.8M1574.5 230.8h3.2M1589.5 230.8h3.2M1563.5 232.4h0.8M1580.9 232.4h3.2M1606.9 232.4h3.2M1563.5 237.2h0.8M1580.1 237.2h3.2M1562.7 242.0h3.2M1563.5 243.6h3.2M1557.2 246.8h2.4M1560.3 248.4h3.2M1573.8 248.4h3.2M1563.5 250.0h3.2M1563.5 251.6h3.2M1575.3 251.6h3.2M1560.3 254.8h3.2M1577.7 254.8h3.2M1560.3 256.4h3.2M1578.5 256.4h3.2M1557.2 259.6h2.4M1567.4 261.2h3.2M1557.2 267.6h2.4M1563.5 272.4h3.2M1580.1 272.4h2.4M1583.2 272.4h3.2M1563.5 274.0h3.2M1582.4 274.0h3.2M1563.5 275.6h3.2M1563.5 278.8h3.2M1566.6 280.4h3.2M1586.4 280.4h3.2M1566.6 283.6h3.2M1569.8 286.8h3.2M1584.0 286.8h3.2M1591.1 288.4h3.2M1603.8 288.4h3.2M1563.5 293.2h3.2M1579.3 294.8h1.6M1584.8 294.8h3.2M1566.6 296.4h3.2M1582.4 299.6h3.2M1565.8 301.2h3.2M1566.6 302.8h3.2M1563.5 306.0h3.2M1575.3 306.0h2.4M1578.5 306.0h3.2M1565.8 307.6h3.2M1566.6 309.2h3.2M1563.5 312.4h3.2M1566.6 314.0h3.2M1566.6 315.6h3.2M1584.8 315.6h3.2M1563.5 318.8h3.2M1566.6 320.4h3.2M1566.6 323.6h3.2M1586.4 323.6h3.2M1588.0 325.2h3.2M1600.6 325.2h3.2M1557.2 331.6h2.4M1560.3 333.2h3.2M1560.3 334.8h3.2M1557.2 338.0h2.4M1560.3 339.6h3.2M1571.4 339.6h3.2M1564.3 342.8h3.2M1563.5 344.4h3.2M1576.1 344.4h3.2M1560.3 347.6h3.2M1571.4 349.2h3.2M1577.7 349.2h3.2M1573.0 350.8h3.2M1583.2 350.8h3.2M1603.8 350.8h3.2M1567.4 360.4h3.2M1571.4 362.0h3.2M1570.6 363.6h3.2M1563.5 365.2h3.2M1574.5 365.2h3.2M1554.0 370.0h2.4M1596.7 371.6h3.2M1612.5 374.8h3.2M1554.0 381.2h2.4"/>
<path stroke="#367467" d="M1558.7 30.8h6.3M1558.7 118.8h7.9"/>
<path stroke="#7d7d64" d="M1560.3 32.4h6.3M1560.3 90.0h7.1M1560.3 98.0h3.2M1560.3 102.8h3.2M1560.3 120.4h6.3M1560.3 221.2h5.5M1560.3 246.8h13.4M1560.3 259.6h10.3M1560.3 267.6h9.5M1560.3 269.2h4.0M1560.3 331.6h2.4M1560.3 338.0h5.5M1557.2 370.0h3.2M1557.2 381.2h6.3"/>
<path stroke="#5d5216" d="M1566.6 32.4h0.8M1616.4 32.4h0.8M1574.5 43.6h0.8M1587.2 43.6h0.8M1584.0 51.6h0.8M1595.1 51.6h0.8M1577.7 59.6h0.8M1573.8 62.8h0.8M1567.4 72.4h0.8M1590.3 72.4h0.8M1570.6 77.2h0.8M1571.4 77.2h0.8M1578.5 80.4h0.8M1585.6 80.4h0.8M1570.6 82.0h0.8M1606.1 82.0h0.8M1568.2 83.6h0.8M1569.8 83.6h0.8M1581.7 83.6h0.8M1596.7 83.6h0.8M1571.4 85.2h0.8M1608.5 85.2h0.8M1619.6 85.2h0.8M1620.4 85.2h0.8M1571.4 86.8h0.8M1584.8 86.8h0.8M1567.4 90.0h0.8M1584.0 90.0h0.8M1591.9 93.2h0.8M1607.7 93.2h0.8M1608.5 93.2h0.8M1610.1 93.2h0.8M1563.5 98.0h0.8M1567.4 98.0h0.8M1575.3 99.6h0.8M1588.0 99.6h0.8M1563.5 102.8h0.8M1567.4 102.8h0.8M1572.2 106.0h0.8M1588.0 106.0h0.8M1572.2 107.6h0.8M1573.8 107.6h0.8M1574.5 107.6h0.8M1576.1 107.6h0.8M1580.1 107.6h0.8M1581.7 107.6h0.8M1582.4 107.6h0.8M1584.0 107.6h0.8M1588.8 107.6h0.8M1590.3 107.6h0.8M1581.7 112.4h0.8M1583.2 112.4h0.8M1566.6 120.4h0.8M1578.5 120.4h0.8M1564.3 122.0h0.8M1565.1 122.0h0.8M1573.0 122.0h0.8M1591.9 122.0h0.8M1587.2 144.4h0.8M1588.0 144.4h0.8M1589.5 146.0h0.8M1590.3 146.0h0.8M1580.1 147.6h0.8M1603.8 147.6h0.8M1584.0 150.8h0.8M1560.3 162.0h0.8M1584.8 166.8h0.8M1560.3 181.2h0.8M1571.4 184.4h0.8M1573.0 184.4h0.8M1579.3 187.6h0.8M1612.5 187.6h0.8M1578.5 190.8h0.8M1584.0 190.8h0.8M1580.1 194.0h0.8M1587.2 194.0h0.8M1578.5 195.6h0.8M1585.6 195.6h0.8M1579.3 197.2h0.8M1586.4 197.2h0.8M1579.3 198.8h0.8M1586.4 198.8h0.8M1576.9 205.2h0.8M1606.9 205.2h0.8M1584.0 206.8h0.8M1603.8 206.8h0.8M1584.0 211.6h0.8M1606.9 211.6h0.8M1584.0 213.2h0.8M1598.2 213.2h0.8M1573.0 218.0h0.8M1576.9 218.0h0.8M1565.8 221.2h0.8M1573.0 221.2h0.8M1574.5 222.8h0.8M1575.3 232.4h0.8M1579.3 232.4h0.8M1560.3 238.8h0.8M1580.9 243.6h0.8M1581.7 243.6h0.8M1573.8 246.8h0.8M1577.7 246.8h0.8M1588.0 248.4h0.8M1560.3 253.2h0.8M1570.6 259.6h0.8M1588.8 259.6h0.8M1568.2 262.8h0.8M1593.5 262.8h0.8M1568.2 264.4h0.8M1594.3 264.4h0.8M1569.8 267.6h0.8M1588.8 267.6h0.8M1564.3 269.2h0.8M1578.5 269.2h0.8M1573.0 275.6h0.8M1573.8 275.6h0.8M1569.8 278.8h0.8M1570.6 278.8h0.8M1585.6 280.4h0.8M1606.9 280.4h0.8M1593.5 283.6h0.8M1607.7 283.6h0.8M1593.5 286.8h0.8M1595.1 286.8h0.8M1590.3 288.4h0.8M1618.0 288.4h0.8M1573.0 296.4h0.8M1573.8 296.4h0.8M1581.7 299.6h0.8M1588.8 299.6h0.8M1576.1 302.8h0.8M1576.9 302.8h0.8M1586.4 314.0h0.8M1573.8 374.8h0.8M1584.0 374.8h0.8M1599.8 374.8h0.8M1610.1 374.8h0.8"/>
<path stroke="#5d7d8e" d="M1567.4 32.4h3.2M1572.2 32.4h4.0M1577.7 32.4h2.4M1581.7 32.4h4.7M1588.0 32.4h2.4M1591.9 32.4h4.0M1597.5 32.4h2.4M1603.0 32.4h4.7M1610.1 32.4h4.7M1615.6 32.4h0.8M1568.2 90.0h3.2M1573.0 90.0h7.1M1580.9 90.0h3.2M1564.3 98.0h3.2M1564.3 102.8h3.2M1567.4 120.4h3.2M1573.0 120.4h0.8M1576.9 120.4h1.6M1566.6 221.2h3.2M1572.2 221.2h0.8M1574.5 246.8h3.2M1571.4 259.6h3.2M1576.1 259.6h0.8M1578.5 259.6h0.8M1580.9 259.6h1.6M1584.0 259.6h1.6M1588.0 259.6h0.8M1570.6 267.6h3.2M1575.3 267.6h4.7M1581.7 267.6h7.1M1563.5 331.6h3.2M1569.0 331.6h0.8M1566.6 338.0h3.2"/>
<path stroke="#6a7663" d="M1593.5 35.6h0.8M1586.4 43.6h0.8M1580.1 66.0h0.8M1570.6 75.6h0.8M1585.6 82.0h0.8M1569.0 83.6h0.8M1595.1 83.6h0.8M1586.4 85.2h0.8M1590.3 85.2h0.8M1604.6 85.2h0.8M1606.9 85.2h0.8M1580.9 86.8h0.8M1584.0 86.8h0.8M1584.0 91.6h0.8M1609.3 93.2h0.8M1577.7 106.0h0.8M1580.1 106.0h0.8M1580.9 107.6h0.8M1563.5 154.0h0.8M1563.5 155.6h0.8M1563.5 157.2h0.8M1576.1 158.8h0.8M1563.5 168.4h0.8M1569.0 174.8h0.8M1571.4 174.8h0.8M1573.8 174.8h0.8M1565.1 176.4h0.8M1569.0 176.4h0.8M1573.0 176.4h0.8M1579.3 178.0h0.8M1581.7 179.6h2.4M1572.2 184.4h0.8M1591.1 187.6h0.8M1593.5 187.6h0.8M1576.9 202.0h0.8M1588.0 205.2h2.4M1591.9 205.2h2.4M1595.9 205.2h2.4M1599.8 205.2h2.4M1606.1 205.2h0.8M1592.7 211.6h0.8M1595.9 213.2h2.4M1576.1 232.4h0.8M1577.7 232.4h1.6M1605.3 232.4h1.6M1591.9 262.8h0.8M1592.7 264.4h0.8M1570.6 270.8h4.0M1603.0 280.4h0.8M1606.1 280.4h0.8M1603.0 283.6h0.8M1578.5 285.2h0.8M1594.3 286.8h0.8M1599.8 288.4h2.4M1564.3 291.6h1.6M1576.9 291.6h1.6M1576.9 293.2h1.6M1576.9 294.8h1.6M1581.7 294.8h1.6M1614.0 294.8h1.6M1572.2 304.4h2.4M1580.9 312.4h0.8M1573.8 318.8h0.8M1576.9 322.0h0.8M1584.0 323.6h0.8M1596.7 325.2h2.4M1601.4 350.8h0.8M1608.5 350.8h0.8M1563.5 352.4h0.8M1563.5 354.0h0.8M1563.5 355.6h0.8M1563.5 357.2h0.8M1617.2 374.8h0.8"/>
<path stroke="#76584b" d="M1578.5 59.6h0.8M1579.3 59.6h1.6M1581.7 59.6h3.2M1585.6 59.6h4.7M1591.1 59.6h4.0M1595.1 59.6h0.8M1563.5 61.2h0.8M1564.3 61.2h4.0M1569.0 61.2h2.4M1572.2 61.2h4.7M1577.7 61.2h3.2M1581.7 61.2h6.3M1588.8 61.2h4.0M1592.7 61.2h0.8M1563.5 62.8h0.8M1564.3 62.8h1.6M1566.6 62.8h6.3M1573.0 62.8h0.8M1568.2 72.4h0.8M1569.0 72.4h7.1M1576.1 72.4h0.8M1580.9 82.0h0.8M1581.7 82.0h0.8M1582.4 82.0h0.8M1582.4 83.6h0.8M1583.2 83.6h0.8M1584.0 83.6h0.8M1581.7 85.2h0.8M1582.4 85.2h0.8M1583.2 85.2h0.8M1601.4 93.2h0.8M1602.2 93.2h4.7M1606.9 93.2h0.8M1597.5 147.6h0.8M1598.2 147.6h4.7M1603.0 147.6h0.8M1563.5 152.4h0.8M1564.3 152.4h0.8M1565.1 173.2h0.8M1565.8 173.2h4.0M1569.8 173.2h0.8M1575.3 206.8h0.8M1576.1 206.8h3.2M1580.1 206.8h3.2M1604.6 206.8h0.8M1564.3 224.4h0.8M1565.1 224.4h3.2M1569.0 224.4h3.2M1595.1 224.4h0.8M1564.3 226.0h0.8M1565.1 226.0h2.4M1568.2 226.0h8.7M1606.9 226.0h0.8M1564.3 227.6h0.8M1565.1 227.6h6.3M1572.2 227.6h4.0M1600.6 227.6h0.8M1603.0 227.6h0.8M1564.3 229.2h0.8M1565.1 229.2h5.5M1571.4 229.2h7.1M1579.3 229.2h4.0M1606.9 229.2h0.8M1564.3 230.8h0.8M1565.1 230.8h3.2M1569.0 230.8h4.0M1595.1 230.8h0.8M1564.3 232.4h0.8M1565.1 232.4h7.9M1614.0 232.4h0.8M1563.5 234.0h0.8M1564.3 234.0h4.0M1569.0 234.0h2.4M1572.2 234.0h3.2M1576.1 234.0h1.6M1578.5 234.0h4.7M1584.0 234.0h1.6M1586.4 234.0h7.9M1595.9 234.0h3.2M1599.8 234.0h4.7M1605.3 234.0h2.4M1609.3 234.0h3.2M1613.2 234.0h4.0M1618.0 234.0h7.9M1626.7 234.0h4.0M1632.2 234.0h0.8M1563.5 235.6h0.8M1564.3 235.6h4.7M1569.8 235.6h7.1M1577.7 235.6h4.0M1583.2 235.6h1.6M1585.6 235.6h10.3M1597.5 235.6h0.8M1599.0 235.6h1.6M1601.4 235.6h1.6M1603.8 235.6h4.7M1609.3 235.6h4.0M1614.0 235.6h5.5M1622.7 235.6h0.8M1564.3 237.2h0.8M1565.1 237.2h4.7M1571.4 237.2h0.8M1573.0 237.2h0.8M1574.5 237.2h0.8M1606.9 237.2h0.8M1566.6 350.8h0.8M1567.4 350.8h3.2M1570.6 350.8h0.8M1574.5 374.8h0.8M1575.3 374.8h7.9M1583.2 374.8h0.8M1600.6 374.8h0.8M1601.4 374.8h7.9M1609.3 374.8h0.8"/>
<path stroke="#533552" d="M1580.1 82.0h0.8M1600.6 82.0h0.8M1594.3 83.6h0.8M1595.9 83.6h0.8M1580.9 85.2h0.8M1591.1 85.2h0.8M1603.8 85.2h0.8M1607.7 85.2h0.8M1580.1 86.8h0.8M1581.7 86.8h0.8M1576.9 106.0h0.8M1580.9 106.0h0.8M1568.2 174.8h0.8M1574.5 174.8h0.8M1587.2 205.2h0.8M1602.2 205.2h0.8M1573.0 224.4h0.8M1592.7 224.4h0.8M1577.7 226.0h0.8M1604.6 226.0h0.8M1576.9 227.6h0.8M1599.8 227.6h0.8M1584.0 229.2h0.8M1604.6 229.2h0.8M1573.8 230.8h0.8M1592.7 230.8h0.8M1573.8 232.4h0.8M1610.1 232.4h0.8M1570.6 237.2h0.8M1606.1 237.2h0.8M1569.0 262.8h0.8M1576.1 262.8h0.8M1579.3 262.8h0.8M1592.7 262.8h0.8M1569.0 264.4h0.8M1576.1 264.4h0.8M1579.3 264.4h0.8M1593.5 264.4h0.8M1602.2 280.4h0.8M1603.8 280.4h0.8M1584.0 315.6h0.8M1592.7 315.6h0.8M1587.2 325.2h0.8M1614.8 325.2h0.8M1569.8 328.4h0.8M1570.6 328.4h0.8M1581.7 328.4h0.8M1595.9 328.4h0.8M1562.7 331.6h0.8M1569.8 331.6h0.8M1575.3 333.2h0.8"/>
<path stroke="#1c425d" d="M1584.8 82.0h0.8M1586.4 82.0h0.8M1585.6 85.2h0.8M1587.2 85.2h0.8M1560.3 94.8h0.8M1574.5 232.4h0.8M1603.8 232.4h0.8M1579.3 237.2h0.8M1605.3 237.2h0.8M1563.5 298.0h0.8M1565.8 338.0h0.8M1569.8 338.0h0.8M1568.2 339.6h0.8M1569.0 339.6h0.8M1575.3 344.4h0.8M1579.3 344.4h0.8M1570.6 349.2h0.8M1560.3 358.8h0.8M1569.8 363.6h0.8M1575.3 363.6h0.8M1573.8 365.2h0.8M1579.3 365.2h0.8M1560.3 370.0h0.8M1561.1 370.0h0.8M1568.2 371.6h0.8M1557.2 376.4h0.8M1563.5 381.2h0.8M1564.3 381.2h0.8M1560.3 382.8h0.8M1561.1 382.8h0.8M1565.1 382.8h0.8M1565.8 382.8h0.8"/>
<path stroke="#445c3a" d="M1560.3 136.4h0.8M1561.9 136.4h2.4M1565.1 136.4h1.6M1567.4 136.4h4.7M1560.3 138.0h0.8M1561.9 138.0h15.8M1578.5 138.0h1.6M1580.9 138.0h11.1M1592.7 138.0h1.6M1560.3 139.6h0.8M1561.9 139.6h15.0M1577.7 139.6h0.8M1579.3 139.6h4.0M1584.0 139.6h4.7M1589.5 139.6h0.8M1591.1 139.6h4.0M1595.9 139.6h1.6M1560.3 141.2h0.8"/>
<path stroke="#7a6c4e" d="M1593.5 224.4h1.6M1605.3 226.0h1.6M1601.4 227.6h1.6M1605.3 229.2h1.6M1593.5 230.8h1.6M1610.9 232.4h1.6M1612.5 232.4h1.6M1594.3 234.0h1.6M1607.7 234.0h1.6M1630.6 234.0h1.6M1581.7 235.6h1.6M1595.9 235.6h1.6M1619.6 235.6h1.6M1621.2 235.6h1.6"/>
</svg><div style="left:1549.2px;top:150.2px;width:2px;height:16px;background:#587c0c"></div><div style="left:1549.2px;top:241.4px;width:2px;height:17.6px;background:#587c0c"></div><div style="left:1549.2px;top:273.4px;width:2px;height:3.2px;background:#587c0c"></div><div style="left:1549.2px;top:372.6px;width:2px;height:4.8px;background:#587c0c"></div><div style="left:1549.2px;top:29.6px;width:2px;height:2.2px;background:#c03a3a"></div><div style="left:1549.2px;top:71.8px;width:2px;height:2.2px;background:#0c7d9d"></div><div style="left:1549.2px;top:380.6px;width:2px;height:2.2px;background:#0c7d9d"></div>
<div style="left:1643px;top:1px;width:1px;height:955px;background:#303031"></div><div style="left:1643px;top:1px;width:17px;height:1px;background:#303031"></div><div style="left:1644px;top:436px;width:16px;height:146px;background:#424242"></div><div style="left:1644px;top:448.5px;width:16px;height:2px;background:#8a8a8a"></div><div style="left:1644px;top:56px;width:8px;height:7px;background:#a83a3a"></div><div style="left:1644px;top:147px;width:8px;height:7px;background:#1b6a8c"></div><div style="left:1644px;top:315px;width:8px;height:34px;background:#466b0b"></div><div style="left:1644px;top:507px;width:8px;height:37px;background:#526a38"></div><div style="left:1644px;top:574px;width:8px;height:8px;background:#526a38"></div><div style="left:1644px;top:784px;width:8px;height:11px;background:#466b0b"></div><div style="left:1644px;top:800px;width:8px;height:6px;background:#1b6a8c"></div>
</div>
<div style="left:334px;top:108px;width:1660px;height:25.4px;background:#1e1e1e"></div>
<span class="t" style="left:357.00px;top:111px;font-size:14.60px;line-height:22px;letter-spacing:-0.292px;transform:scaleX(0.9520);color:#a9a9a9">src</span>
<svg style="left:386.3px;top:115px" width="8" height="12" viewBox="0 0 8 12" ><path d="M1.5 0.9L6.6 6L1.5 11.1" fill="none" stroke="#a0a0a0" stroke-width="1.2" stroke-linecap="butt" stroke-linejoin="miter"/></svg>
<span class="t" style="left:404.80px;top:111px;font-size:14.60px;line-height:22px;color:#a9a9a9">conway</span>
<svg style="left:464.5px;top:115px" width="8" height="12" viewBox="0 0 8 12" ><path d="M1.5 0.9L6.6 6L1.5 11.1" fill="none" stroke="#a0a0a0" stroke-width="1.2" stroke-linecap="butt" stroke-linejoin="miter"/></svg>
<svg style="left:486.4px;top:114.2px" width="12.4" height="12.4" viewBox="0 0 24 24" ><g fill="#4a809d" stroke="#1e1e1e" stroke-width="0.35"><path d="M8.5 0.5H15.5Q17.5 0.5 17.5 2.5V9.5Q17.5 11.5 15.5 11.5H9Q6.5 11.5 6.5 14V17.5H3Q0.5 17.5 0.5 15V9Q0.5 6.5 3 6.5H12V5.5H6.5V2.5Q6.5 0.5 8.5 0.5Z"/><path d="M8.5 0.5H15.5Q17.5 0.5 17.5 2.5V9.5Q17.5 11.5 15.5 11.5H9Q6.5 11.5 6.5 14V17.5H3Q0.5 17.5 0.5 15V9Q0.5 6.5 3 6.5H12V5.5H6.5V2.5Q6.5 0.5 8.5 0.5Z" transform="rotate(180 12 12)"/></g><circle cx="9.2" cy="3.1" r="0.8" fill="#1e1e1e"/><circle cx="14.8" cy="20.9" r="0.8" fill="#1e1e1e"/></svg>
<span class="t" style="left:509.40px;top:111px;font-size:14.60px;line-height:22px;letter-spacing:0.025px;color:#a9a9a9">app.py</span>
<svg style="left:563.8px;top:115px" width="8" height="12" viewBox="0 0 8 12" ><path d="M1.5 0.9L6.6 6L1.5 11.1" fill="none" stroke="#a0a0a0" stroke-width="1.2" stroke-linecap="butt" stroke-linejoin="miter"/></svg>
<svg style="left:584px;top:113.6px" width="16" height="16" viewBox="0 0 16 16" ><g transform="scale(0.62)"><rect x="-4.9" y="-2.7" width="9.8" height="5.4" rx="0.8" transform="translate(7 6.6) rotate(-42)" fill="none" stroke="#c5c5c5" stroke-width="1.8" stroke-linecap="butt" stroke-linejoin="miter"/><rect x="-3.7" y="-1.9" width="7.4" height="3.8" rx="0.8" transform="translate(20.4 11) rotate(-42)" fill="none" stroke="#c5c5c5" stroke-width="1.7" stroke-linecap="butt" stroke-linejoin="miter"/><rect x="-3.7" y="-1.9" width="7.4" height="3.8" rx="0.8" transform="translate(20.4 20) rotate(-42)" fill="none" stroke="#c5c5c5" stroke-width="1.7" stroke-linecap="butt" stroke-linejoin="miter"/><path d="M8.4 10.6V20H16.4M8.4 12.2H16.6" fill="none" stroke="#c5c5c5" stroke-width="1.8" stroke-linecap="butt" stroke-linejoin="miter"/></g></svg>
<span class="t" style="left:606.60px;top:111px;font-size:14.60px;line-height:22px;letter-spacing:0.135px;color:#a9a9a9">LifeWindow</span>
<svg style="left:693.2px;top:115px" width="8" height="12" viewBox="0 0 8 12" ><path d="M1.5 0.9L6.6 6L1.5 11.1" fill="none" stroke="#a0a0a0" stroke-width="1.2" stroke-linecap="butt" stroke-linejoin="miter"/></svg>
<svg style="left:714.7px;top:112.8px" width="15" height="16.2" viewBox="0 0 15 16.2" ><path d="M7.4 0.8L14 4.2V11.8L7.4 15.4L0.8 11.8V4.2Z" fill="none" stroke="#c5c5c5" stroke-width="1.2" stroke-linecap="butt" stroke-linejoin="round"/><path d="M1 4.4L7.4 7.8L13.8 4.4M7.4 7.8V15.2" fill="none" stroke="#c5c5c5" stroke-width="1.2" stroke-linecap="butt" stroke-linejoin="miter"/></svg>
<span class="t" style="left:735.47px;top:111px;font-size:14.60px;line-height:22px;letter-spacing:-0.292px;transform:scaleX(0.9341);color:#a9a9a9">__init__</span>
<div style="left:1993px;top:71px;width:1px;height:37px;background:#2c2c2c"></div>
<div style="left:1993px;top:108px;width:1px;height:981px;background:#282828"></div>
<div style="left:0px;top:1089px;width:2048px;height:25px;background:#007acc"></div>
<div style="left:0px;top:1089px;width:39px;height:25px;background:#16825d"></div>
<svg style="left:0;top:0" width="2048" height="1114" viewBox="0 0 2048 1114"><path d="M14.5 1099.2L19.6 1103.6L14.5 1108" fill="none" stroke="#fff" stroke-width="1.15" stroke-linecap="butt" stroke-linejoin="miter"/><path d="M24.8 1095L20.2 1099.4L24.8 1103.8" fill="none" stroke="#fff" stroke-width="1.15" stroke-linecap="butt" stroke-linejoin="miter"/><circle cx="50.5" cy="1096.6" r="2.1" fill="none" stroke="#fff" stroke-width="1.1" stroke-linecap="butt" stroke-linejoin="miter"/><circle cx="50.5" cy="1107.4" r="2.1" fill="none" stroke="#fff" stroke-width="1.1" stroke-linecap="butt" stroke-linejoin="miter"/><circle cx="57.8" cy="1099.2" r="2.1" fill="none" stroke="#fff" stroke-width="1.1" stroke-linecap="butt" stroke-linejoin="miter"/><path d="M50.5 1098.7V1105.3M57.8 1101.3Q57.8 1103.6 50.7 1104.2" fill="none" stroke="#fff" stroke-width="1.1" stroke-linecap="butt" stroke-linejoin="miter"/><circle cx="123.5" cy="1102" r="6.5" fill="none" stroke="#fff" stroke-width="1.1" stroke-linecap="butt" stroke-linejoin="miter"/><path d="M120.6 1099.1L126.4 1104.9M126.4 1099.1L120.6 1104.9" fill="none" stroke="#fff" stroke-width="1.1" stroke-linecap="butt" stroke-linejoin="miter"/><path d="M154.1 1096.3L160.2 1107.2H148Z" fill="none" stroke="#fff" stroke-width="1.1" stroke-linecap="butt" stroke-linejoin="round"/><path d="M154.1 1099.9V1104.3M154.1 1105.1V1106.1" fill="none" stroke="#fff" stroke-width="1.1" stroke-linecap="butt" stroke-linejoin="miter"/><path d="M1984.8 1106.5L1985.7 1105V1100.4A4.7 4.7 0 0 1 1995.1 1100.4V1105L1996 1106.5Z" fill="none" stroke="#fff" stroke-width="1.1" stroke-linecap="butt" stroke-linejoin="round"/><path d="M1988.7 1107.3Q1990.4 1109.3 1992.1 1107.3" fill="none" stroke="#fff" stroke-width="1.1" stroke-linecap="butt" stroke-linejoin="miter"/><rect x="2017.2" y="1096.5" width="13.1" height="11.1" rx="0.8" fill="none" stroke="#fff" stroke-width="1.1" stroke-linecap="butt" stroke-linejoin="miter"/><path d="M2017.2 1099.5H2030.3" fill="none" stroke="#fff" stroke-width="1.1" stroke-linecap="butt" stroke-linejoin="miter"/></svg><span class="t" style="left:1903.8px;top:1091px;font-size:13.5px;line-height:20px;letter-spacing:2.6px;color:#fff">{}</span>
<span class="t" style="left:66.40px;top:1093px;font-size:13.80px;line-height:21px;letter-spacing:-0.040px;color:#fff">main*</span>
<span class="t" style="left:135.90px;top:1093px;font-size:13.80px;line-height:21px;color:#fff">0</span>
<span class="t" style="left:166.10px;top:1093px;font-size:13.80px;line-height:21px;color:#fff">0</span>
<span class="t" style="left:1528.90px;top:1093px;font-size:13.80px;line-height:21px;letter-spacing:-0.276px;transform:scaleX(0.9910);color:#fff">3.12.1 ('.venv': venv)</span>
<span class="t" style="left:1663.60px;top:1093px;font-size:13.80px;line-height:21px;letter-spacing:-0.276px;transform:scaleX(0.9683);color:#fff">Ln 134, Col 1</span>
<span class="t" style="left:1755.80px;top:1093px;font-size:13.80px;line-height:21px;letter-spacing:-0.276px;transform:scaleX(0.7531);color:#fff">LF</span>
<span class="t" style="left:1782.90px;top:1093px;font-size:13.80px;line-height:21px;letter-spacing:-0.276px;transform:scaleX(0.9285);color:#fff">UTF-8</span>
<span class="t" style="left:1832.70px;top:1093px;font-size:13.80px;line-height:21px;letter-spacing:-0.276px;transform:scaleX(0.9436);color:#fff">Spaces: 4</span>
<span class="t" style="left:1926.10px;top:1093px;font-size:13.80px;line-height:21px;letter-spacing:-0.177px;color:#fff">Python</span>
</body></html>
